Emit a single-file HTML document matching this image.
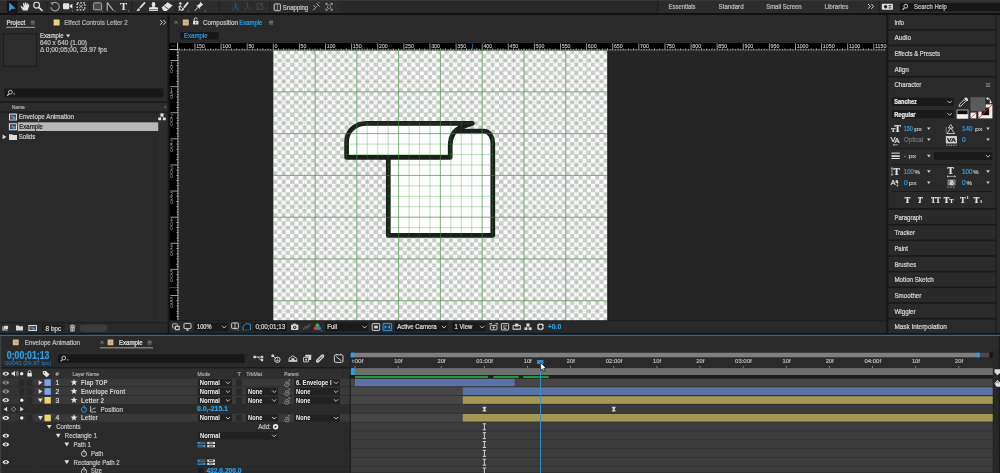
<!DOCTYPE html>
<html lang="en"><head><meta charset="utf-8"><title>After Effects - Example</title>
<style>
html,body{margin:0;padding:0;background:#222;overflow:hidden}
svg{display:block;filter:blur(0.35px);opacity:.999;will-change:transform;font-family:"Liberation Sans",sans-serif}
text{white-space:pre}
</style></head><body>
<svg width="1000" height="473" viewBox="0 0 1000 473">
<rect x="0" y="0" width="1000" height="473" fill="#171717"/>
<rect x="0" y="0" width="1000" height="13" fill="#2d2d2d"/>
<rect x="340" y="0" width="318" height="13" fill="#292929"/>
<rect x="0" y="0" width="1000" height="0.8" fill="#3b3b3b"/>
<rect x="0" y="14.7" width="167.5" height="318.3" fill="#2b2b2b"/>
<rect x="169.6" y="14.7" width="716.6" height="318.1" fill="#2b2b2b"/>
<rect x="888.4" y="14.7" width="111.6" height="318.3" fill="#1a1a1a"/>
<rect x="0" y="335.8" width="1000" height="137.2" fill="#2b2b2b"/>
<rect x="0" y="334.8" width="1000" height="1.1" fill="#2277b8"/>
<rect x="6.8" y="0.8" width="10.8" height="11.6" fill="#161616" rx="0.8"/>
<path d="M9.2,2.4 L9.2,11.2 L11.6,9 L15.6,8.6 Z" fill="#2d9fea"/>
<path d="M21.6,6.2 C21,5.4 20.4,5.6 20.6,6.4 L23,10.6 L27.6,10.6 L29.2,6 L29.2,4.2 L28.2,4.2 L28,5.6 L27.6,3 L26.6,3 L26.4,5.4 L25.8,2.4 L24.8,2.4 L24.8,5.4 L23.8,3 L22.9,3.2 L23.6,7.4 Z" fill="#e4e4e4"/>
<circle cx="36.6" cy="5.2" r="2.9" fill="none" stroke="#e4e4e4" stroke-width="1.1"/>
<line x1="38.8" y1="7.4" x2="42" y2="10.4" stroke="#e4e4e4" stroke-width="1.5" stroke-linecap="round"/>
<line x1="46.8" y1="1.5" x2="46.8" y2="12.5" stroke="#1d1d1d" stroke-width="0.8"/>
<path d="M52.6,3.2 A4.2,4.2 0 1 1 50.9,7.2" fill="none" stroke="#9a9a9a" stroke-width="1.2"/>
<path d="M50.4,2.2 L53.6,2.6 L52.2,5.4 Z" fill="#9a9a9a"/>
<rect x="63" y="3.2" width="6.2" height="6" fill="#e4e4e4" rx="1"/>
<path d="M69.2,6.2 L72.4,3.6 L72.4,8.8 Z" fill="#e4e4e4"/>
<path d="M71.6,10.4 l1.4,0 l0,1.4 z" fill="#9a9a9a"/>
<rect x="77.2" y="2.8" width="7.6" height="7" fill="none" stroke="#e4e4e4" stroke-width="1.3" stroke-dasharray="1.6 1.4"/>
<path d="M79,4.6 L83,8.2 M83,4.6 L79,8.2" fill="none" stroke="#bdbdbd" stroke-width="0.9"/>
<line x1="89.6" y1="1.5" x2="89.6" y2="12.5" stroke="#1d1d1d" stroke-width="0.8"/>
<rect x="93.6" y="2.8" width="8" height="7" rx="0.8" fill="#4a4a4a" stroke="#a8a8a8" stroke-width="1"/>
<path d="M101.4,10.6 l1.4,0 l0,1.4 z" fill="#9a9a9a"/>
<path d="M107.2,2.4 L107.2,10.8 M107.2,2.4 L113.2,10.4" fill="none" stroke="#b8b8b8" stroke-width="1.1"/>
<path d="M113.8,10.6 l1.4,0 l0,1.4 z" fill="#9a9a9a"/>
<text x="123.6" y="10.48" font-size="10.8" fill="#e4e4e4" font-weight="700" text-anchor="middle" font-family='"Liberation Serif", serif'>T</text>
<path d="M127.6,10.6 l1.4,0 l0,1.4 z" fill="#9a9a9a"/>
<line x1="131.9" y1="1.5" x2="131.9" y2="12.5" stroke="#1d1d1d" stroke-width="0.8"/>
<path d="M144.4,1.8 L145.6,3 L140.6,8.6 L139.2,7.4 Z" fill="#e4e4e4"/>
<path d="M138.8,8 L140.2,9.4 C139.4,10.8 138,11.2 136.4,10.9 C137.6,10 137.6,8.8 138.8,8 Z" fill="#e4e4e4"/>
<path d="M152.2,2.2 L154.8,2.2 L155.4,4.8 L154.6,7 L158,7.4 L158,9.4 L149,9.4 L149,7.4 L152.4,7 L151.6,4.8 Z" fill="#e4e4e4"/>
<rect x="149" y="10.1" width="9" height="0.9" fill="#e4e4e4"/>
<path d="M161.6,7.6 L167.6,2.2 L172.6,5.4 L166.6,10.9 L163.6,10.9 Z" fill="#e4e4e4"/>
<path d="M164.2,6 L168.4,9" fill="none" stroke="#2d2d2d" stroke-width="0.8"/>
<line x1="175.9" y1="1.5" x2="175.9" y2="12.5" stroke="#1d1d1d" stroke-width="0.8"/>
<path d="M187.6,1.8 L188.8,3 L184.6,8.2 L183.2,7 Z" fill="#e4e4e4"/>
<path d="M182.8,7.6 L184.2,9 C183.6,10.4 182.4,11 181,10.8 C182,10 182,8.6 182.8,7.6 Z" fill="#e4e4e4"/>
<circle cx="180.4" cy="3.4" r="1.2" fill="#e4e4e4"/>
<path d="M180.4,4.8 L179,10.8 M180.4,6.2 L182.2,7.8 M180.4,6.2 L178.2,7.2 M180,8.6 L181.4,10.8" fill="none" stroke="#e4e4e4" stroke-width="0.95"/>
<path d="M187.6,10.6 l1.4,0 l0,1.4 z" fill="#9a9a9a"/>
<path d="M200.2,1.8 L203.4,5 L201.8,5.4 L200,7.6 L200.2,9.2 L196.2,5.2 L197.8,5.2 L199.8,3.4 Z" fill="#e4e4e4"/>
<line x1="198" y1="7.2" x2="194.8" y2="10.8" stroke="#e4e4e4" stroke-width="1"/>
<path d="M204.4,10.6 l1.4,0 l0,1.4 z" fill="#9a9a9a"/>
<line x1="219.2" y1="1.5" x2="219.2" y2="12.5" stroke="#1d1d1d" stroke-width="0.8"/>
<rect x="230.6" y="1.2" width="10" height="11" fill="#2a3238" rx="0.8"/>
<path d="M235.6,2.6 L235.6,7 L232.2,10.4 M235.6,7 L239,10.4" fill="none" stroke="#2a5f8a" stroke-width="0.9"/>
<path d="M247.6,2.6 L247.6,7 L244.2,10.4 M247.6,7 L251,10.4" fill="none" stroke="#4e4e4e" stroke-width="0.9"/>
<path d="M257,3.4 L262.6,3.4 L262.6,9.4 L257,9.4 Z M257,9.4 L262.6,3.4" fill="none" stroke="#474747" stroke-width="0.9"/>
<line x1="270" y1="1.5" x2="270" y2="12.5" stroke="#1d1d1d" stroke-width="0.8"/>
<rect x="274.2" y="3.9" width="6.2" height="6.8" rx="0.9" fill="none" stroke="#d8d8d8" stroke-width="0.95"/>
<line x1="277.3" y1="3.9" x2="277.3" y2="10.7" stroke="#bdbdbd" stroke-width="0.7"/>
<text x="282.8" y="9.78" font-size="6.8" fill="#c8c8c8" textLength="25.4" lengthAdjust="spacingAndGlyphs" stroke="#c8c8c8" stroke-width="0.22">Snapping</text>
<path d="M313.2,10.2 L317,6.2 M316.4,3.4 L319.6,6.4 M318.6,3 l0.6,-0.8 M315.2,6.2 l-1.8,-0.4" fill="none" stroke="#c4c4c4" stroke-width="0.9"/>
<path d="M326,5 L326,3.4 L327.6,3.4 M330.6,3.4 L332.2,3.4 L332.2,5 M332.2,8.6 L332.2,10.2 L330.6,10.2 M327.6,10.2 L326,10.2 L326,8.6" fill="none" stroke="#c4c4c4" stroke-width="0.9"/>
<rect x="327.6" y="5" width="3" height="3.6" fill="none" stroke="#c4c4c4" stroke-width="0.8" stroke-dasharray="1 0.7"/>
<line x1="658" y1="1.5" x2="658" y2="12.5" stroke="#1d1d1d" stroke-width="0.8"/>
<text x="668.6" y="9.21" font-size="6.6" fill="#bdbdbd" textLength="27" lengthAdjust="spacingAndGlyphs" stroke="#bdbdbd" stroke-width="0.22">Essentials</text>
<text x="718.6" y="9.21" font-size="6.6" fill="#bdbdbd" textLength="25" lengthAdjust="spacingAndGlyphs" stroke="#bdbdbd" stroke-width="0.22">Standard</text>
<text x="766.2" y="9.21" font-size="6.6" fill="#bdbdbd" textLength="35.4" lengthAdjust="spacingAndGlyphs" stroke="#bdbdbd" stroke-width="0.22">Small Screen</text>
<text x="824.4" y="9.21" font-size="6.6" fill="#bdbdbd" textLength="24" lengthAdjust="spacingAndGlyphs" stroke="#bdbdbd" stroke-width="0.22">Libraries</text>
<path d="M868,4 L870.2,6.4 L868,8.8 M871.4,4 L873.6,6.4 L871.4,8.8" fill="none" stroke="#d8d8d8" stroke-width="0.95"/>
<line x1="879" y1="1.5" x2="879" y2="12.5" stroke="#1d1d1d" stroke-width="0.8"/>
<rect x="881.8" y="3.8" width="11.2" height="6" fill="#dedede" rx="1"/>
<circle cx="885.6" cy="6.8" r="1.7" fill="#2d2d2d"/>
<rect x="888.6" y="5.2" width="2.8" height="1" fill="#2d2d2d"/>
<rect x="888.6" y="7.4" width="2.8" height="1" fill="#2d2d2d"/>
<rect x="899.8" y="3" width="100.2" height="8.2" fill="#181818" rx="0.8"/>
<circle cx="905.8" cy="6.2" r="1.9" fill="none" stroke="#d0d0d0" stroke-width="0.9"/>
<line x1="904.4" y1="7.8" x2="902.6" y2="9.8" stroke="#d0d0d0" stroke-width="1.1"/>
<text x="914" y="9.28" font-size="6.8" fill="#c9c9c9" textLength="32.8" lengthAdjust="spacingAndGlyphs" stroke="#c9c9c9" stroke-width="0.22">Search Help</text>
<rect x="0" y="13" width="1000" height="1.7" fill="#111111"/>
<text x="6.6" y="24.88" font-size="6.8" fill="#e2e2e2" textLength="18.6" lengthAdjust="spacingAndGlyphs" stroke="#e2e2e2" stroke-width="0.22">Project</text>
<rect x="30.6" y="20.7" width="4" height="0.8" fill="#8a8a8a"/>
<rect x="30.6" y="22.15" width="4" height="0.8" fill="#8a8a8a"/>
<rect x="30.6" y="23.6" width="4" height="0.8" fill="#8a8a8a"/>
<rect x="6" y="26.8" width="29" height="0.9" fill="#b4b4b4"/>
<rect x="53.6" y="19.6" width="6" height="6" fill="#ead57a" rx="0.6"/>
<text x="64.2" y="24.88" font-size="6.8" fill="#b4b4b4" textLength="63.4" lengthAdjust="spacingAndGlyphs" stroke="#b4b4b4" stroke-width="0.22">Effect Controls Letter 2</text>
<path d="M160.2,20 L162.4,22.4 L160.2,24.8 M163.4,20 L165.6,22.4 L163.4,24.8" fill="none" stroke="#d8d8d8" stroke-width="0.95"/>
<rect x="3.6" y="33.9" width="32.8" height="32.3" fill="#2e2e2e" stroke="#1c1c1c" stroke-width="0.8"/>
<text x="40" y="38.18" font-size="6.8" fill="#d8d8d8" textLength="23.6" lengthAdjust="spacingAndGlyphs" stroke="#d8d8d8" stroke-width="0.22">Example</text>
<path d="M66,34.4 L70.2,34.4 L68.1,37.4 Z" fill="#e0e0e0"/>
<text x="40" y="44.91" font-size="6.6" fill="#c0c0c0" textLength="47" lengthAdjust="spacingAndGlyphs" stroke="#c0c0c0" stroke-width="0.22">640 x 640 (1.00)</text>
<text x="40" y="51.91" font-size="6.6" fill="#c0c0c0" textLength="67" lengthAdjust="spacingAndGlyphs" stroke="#c0c0c0" stroke-width="0.22">Δ 0;00;05;00, 29.97 fps</text>
<rect x="4.3" y="88.5" width="159.1" height="8.9" fill="#191919" rx="1"/>
<circle cx="10.4" cy="92.2" r="1.9" fill="none" stroke="#d0d0d0" stroke-width="0.9"/>
<line x1="9" y1="93.8" x2="7.2" y2="95.6" stroke="#d0d0d0" stroke-width="1.1"/>
<path d="M13.2,93.6 l2.2,0 l-1.1,1.3 z" fill="#c0c0c0"/>
<rect x="0" y="101.6" width="167.5" height="1.4" fill="#181818"/>
<rect x="0" y="103" width="167.5" height="8.6" fill="#2e2e2e"/>
<rect x="0" y="111.6" width="167.5" height="1" fill="#1a1a1a"/>
<text x="11.8" y="109.23" font-size="5.8" fill="#b0b0b0" textLength="12.8" lengthAdjust="spacingAndGlyphs" stroke="#b0b0b0" stroke-width="0.22">Name</text>
<rect x="164.6" y="106.6" width="1.6" height="1.2" fill="#2d9fea"/>
<rect x="158.2" y="112.6" width="9.3" height="209.8" fill="#2e2e2e"/>
<rect x="9" y="113.6" width="8" height="7" fill="#dcdcdc" rx="0.6"/>
<rect x="10" y="114.6" width="6" height="5" fill="#3b4a63"/>
<circle cx="12.2" cy="116.8" r="1.5" fill="#d24a3a"/>
<rect x="12.6" y="116.6" width="2.8" height="2.4" fill="#4aa0d8"/>
<text x="18.8" y="119.48" font-size="6.8" fill="#cdcdcd" textLength="55.2" lengthAdjust="spacingAndGlyphs" stroke="#cdcdcd" stroke-width="0.22">Envelope Animation</text>
<rect x="160.4" y="113.4" width="3.2" height="2.6" fill="#e0e0e0"/>
<rect x="158.2" y="117.6" width="3" height="2.6" fill="#e0e0e0"/>
<rect x="162.8" y="117.6" width="3" height="2.6" fill="#e0e0e0"/>
<path d="M162,116 L159.7,117.8 M162,116 L164.3,117.8" fill="none" stroke="#e0e0e0" stroke-width="0.8"/>
<rect x="8" y="122.3" width="9.9" height="8.7" fill="#3c3c3c"/>
<rect x="17.9" y="122.3" width="140.3" height="8.7" fill="#b9b9b9"/>
<rect x="9" y="123.2" width="8" height="7" fill="#dcdcdc" rx="0.6"/>
<rect x="10" y="124.2" width="6" height="5" fill="#3b4a63"/>
<circle cx="12.2" cy="126.4" r="1.5" fill="#d24a3a"/>
<rect x="12.6" y="126.2" width="2.8" height="2.4" fill="#4aa0d8"/>
<text x="19.2" y="129.08" font-size="6.8" fill="#1c1c1c" textLength="23.8" lengthAdjust="spacingAndGlyphs" stroke="#1c1c1c" stroke-width="0.22">Example</text>
<path d="M2.6,134.6 L6.4,136.9 L2.6,139.2 Z" fill="#e0e0e0"/>
<path d="M9,134.2 L12.2,134.2 L13,135 L17,135 L17,140 L9,140 Z" fill="#dedede"/>
<text x="18.8" y="139.38" font-size="6.8" fill="#cdcdcd" textLength="16.4" lengthAdjust="spacingAndGlyphs" stroke="#cdcdcd" stroke-width="0.22">Solids</text>
<rect x="0" y="322.4" width="167.5" height="1" fill="#1a1a1a"/>
<rect x="0" y="323.4" width="167.5" height="9.6" fill="#2b2b2b"/>
<rect x="2.4" y="326.2" width="5.2" height="4.4" fill="#d8d8d8" rx="0.5"/>
<rect x="3.4" y="325.2" width="5.2" height="4.2" fill="#2a2a2a" rx="0.5"/>
<rect x="3.9" y="325.7" width="4.2" height="3.2" fill="#d8d8d8" rx="0.4"/>
<path d="M16,325.4 L18.6,325.4 L19.2,326.2 L23,326.2 L23,330.6 L16,330.6 Z" fill="#d8d8d8"/>
<rect x="28.4" y="325" width="8.6" height="6" fill="#dcdcdc" rx="0.6"/>
<rect x="29.4" y="326" width="6.6" height="4" fill="#3b4a63"/>
<circle cx="31.8" cy="327.8" r="1.4" fill="#d24a3a"/>
<rect x="32.4" y="327.6" width="2.6" height="2" fill="#4aa0d8"/>
<rect x="41.6" y="324.4" width="23" height="7.6" fill="#222222" rx="0.8"/>
<text x="45.6" y="330.61" font-size="6.6" fill="#d4d4d4" textLength="15.6" lengthAdjust="spacingAndGlyphs" stroke="#d4d4d4" stroke-width="0.22">8 bpc</text>
<path d="M69.6,326 L75.4,326 M71.4,326 L71.4,325 L73.6,325 L73.6,326" fill="none" stroke="#d0d0d0" stroke-width="0.8"/>
<path d="M70.2,326.8 L74.8,326.8 L74.4,331.4 L70.6,331.4 Z" fill="#cfcfcf"/>
<path d="M71.6,327.6 L71.8,330.6 M73.4,327.6 L73.2,330.6" fill="none" stroke="#2a2a2a" stroke-width="0.6"/>
<rect x="79.6" y="324.6" width="27.8" height="7.4" fill="#3d3d3d" rx="3.7"/>
<path d="M174.6,20.8 L177.6,23.8 M177.6,20.8 L174.6,23.8" fill="none" stroke="#8c8c8c" stroke-width="0.8"/>
<rect x="182.8" y="19.4" width="6" height="6" fill="#d9b98c" rx="0.6"/>
<path d="M185.8,19.4 L185.8,25.4 M182.8,22.4 L188.8,22.4" fill="none" stroke="#b8966a" stroke-width="0.5"/>
<path d="M194.2,20.8 L194.2,19.4 A1.5,1.5 0 0 1 197.2,19.2" fill="none" stroke="#e2e2e2" stroke-width="0.9"/>
<rect x="193" y="20.8" width="5.4" height="3.8" fill="#e2e2e2" rx="0.5"/>
<rect x="195.2" y="21.8" width="1" height="1.6" fill="#262626"/>
<text x="203" y="24.88" font-size="6.8" fill="#c6c6c6" textLength="35" lengthAdjust="spacingAndGlyphs" stroke="#c6c6c6" stroke-width="0.22">Composition</text>
<text x="239.2" y="24.88" font-size="6.8" fill="#2d9fea" textLength="23.2" lengthAdjust="spacingAndGlyphs" stroke="#2d9fea" stroke-width="0.22">Example</text>
<rect x="269" y="20.7" width="4" height="0.8" fill="#8a8a8a"/>
<rect x="269" y="22.15" width="4" height="0.8" fill="#8a8a8a"/>
<rect x="269" y="23.6" width="4" height="0.8" fill="#8a8a8a"/>
<rect x="180.2" y="32" width="38.4" height="7.4" fill="#191919" rx="0.8"/>
<text x="184" y="38.18" font-size="6.8" fill="#2d9fea" textLength="23.6" lengthAdjust="spacingAndGlyphs" stroke="#2d9fea" stroke-width="0.22">Example</text>
<defs>
<clipPath id="viewclip"><rect x="178.4" y="50.3" width="707.6" height="270.1"/></clipPath>
<pattern id="chk" x="273.3" y="8.3" width="8.36" height="8.36" patternUnits="userSpaceOnUse">
<rect x="0" y="0" width="8.36" height="8.36" fill="#ffffff"/>
<rect x="4.18" y="0" width="4.18" height="4.18" fill="#cccccc"/>
<rect x="0" y="4.18" width="4.18" height="4.18" fill="#cccccc"/>
</pattern>
</defs>
<rect x="178.4" y="50.3" width="707.6" height="270.1" fill="#262626"/>
<g clip-path="url(#viewclip)">
<rect x="273.3" y="8.3" width="334.2" height="334.2" fill="url(#chk)"/>
<path d="M388.3,157 L388.3,235.4 L492.8,235.4 L492.8,143.5 C492.8,137 489.5,131.2 484,131.2 L452,131.2 Z" fill="#ffffff" stroke="#1a211c" stroke-width="4.7" stroke-linejoin="round"/>
<path d="M472.4,123.3 L366.5,123.3 C354.5,123.3 346.6,131.5 346.6,142 L346.6,157.4 L450.2,157.4 L450.2,146 C450.2,136 454.5,129.6 462,127 L472.4,123.3 Z" fill="#ffffff" stroke="#1a211c" stroke-width="4.7" stroke-linejoin="round" stroke-linecap="round"/>
<line x1="273.3" y1="8.3" x2="273.3" y2="342.5" stroke="#3f9a3f" stroke-width="0.65" stroke-opacity="0.24"/>
<line x1="273.3" y1="8.3" x2="607.5" y2="8.3" stroke="#3f9a3f" stroke-width="0.65" stroke-opacity="0.24"/>
<line x1="283.74" y1="8.3" x2="283.74" y2="342.5" stroke="#3f9a3f" stroke-width="0.65" stroke-opacity="0.24"/>
<line x1="273.3" y1="18.74" x2="607.5" y2="18.74" stroke="#3f9a3f" stroke-width="0.65" stroke-opacity="0.24"/>
<line x1="294.19" y1="8.3" x2="294.19" y2="342.5" stroke="#3f9a3f" stroke-width="0.65" stroke-opacity="0.24"/>
<line x1="273.3" y1="29.19" x2="607.5" y2="29.19" stroke="#3f9a3f" stroke-width="0.65" stroke-opacity="0.24"/>
<line x1="304.63" y1="8.3" x2="304.63" y2="342.5" stroke="#3f9a3f" stroke-width="0.65" stroke-opacity="0.24"/>
<line x1="273.3" y1="39.63" x2="607.5" y2="39.63" stroke="#3f9a3f" stroke-width="0.65" stroke-opacity="0.24"/>
<line x1="315.08" y1="8.3" x2="315.08" y2="342.5" stroke="#3a8c3a" stroke-width="0.9" stroke-opacity="0.72"/>
<line x1="273.3" y1="50.08" x2="607.5" y2="50.08" stroke="#3a8c3a" stroke-width="0.9" stroke-opacity="0.72"/>
<line x1="325.52" y1="8.3" x2="325.52" y2="342.5" stroke="#3f9a3f" stroke-width="0.65" stroke-opacity="0.24"/>
<line x1="273.3" y1="60.52" x2="607.5" y2="60.52" stroke="#3f9a3f" stroke-width="0.65" stroke-opacity="0.24"/>
<line x1="335.96" y1="8.3" x2="335.96" y2="342.5" stroke="#3f9a3f" stroke-width="0.65" stroke-opacity="0.24"/>
<line x1="273.3" y1="70.96" x2="607.5" y2="70.96" stroke="#3f9a3f" stroke-width="0.65" stroke-opacity="0.24"/>
<line x1="346.41" y1="8.3" x2="346.41" y2="342.5" stroke="#3f9a3f" stroke-width="0.65" stroke-opacity="0.24"/>
<line x1="273.3" y1="81.41" x2="607.5" y2="81.41" stroke="#3f9a3f" stroke-width="0.65" stroke-opacity="0.24"/>
<line x1="356.85" y1="8.3" x2="356.85" y2="342.5" stroke="#3a8c3a" stroke-width="0.9" stroke-opacity="0.72"/>
<line x1="273.3" y1="91.85" x2="607.5" y2="91.85" stroke="#3a8c3a" stroke-width="0.9" stroke-opacity="0.72"/>
<line x1="367.29" y1="8.3" x2="367.29" y2="342.5" stroke="#3f9a3f" stroke-width="0.65" stroke-opacity="0.24"/>
<line x1="273.3" y1="102.29" x2="607.5" y2="102.29" stroke="#3f9a3f" stroke-width="0.65" stroke-opacity="0.24"/>
<line x1="377.74" y1="8.3" x2="377.74" y2="342.5" stroke="#3f9a3f" stroke-width="0.65" stroke-opacity="0.24"/>
<line x1="273.3" y1="112.74" x2="607.5" y2="112.74" stroke="#3f9a3f" stroke-width="0.65" stroke-opacity="0.24"/>
<line x1="388.18" y1="8.3" x2="388.18" y2="342.5" stroke="#3f9a3f" stroke-width="0.65" stroke-opacity="0.24"/>
<line x1="273.3" y1="123.18" x2="607.5" y2="123.18" stroke="#3f9a3f" stroke-width="0.65" stroke-opacity="0.24"/>
<line x1="398.62" y1="8.3" x2="398.62" y2="342.5" stroke="#3a8c3a" stroke-width="0.9" stroke-opacity="0.72"/>
<line x1="273.3" y1="133.62" x2="607.5" y2="133.62" stroke="#3a8c3a" stroke-width="0.9" stroke-opacity="0.72"/>
<line x1="409.07" y1="8.3" x2="409.07" y2="342.5" stroke="#3f9a3f" stroke-width="0.65" stroke-opacity="0.24"/>
<line x1="273.3" y1="144.07" x2="607.5" y2="144.07" stroke="#3f9a3f" stroke-width="0.65" stroke-opacity="0.24"/>
<line x1="419.51" y1="8.3" x2="419.51" y2="342.5" stroke="#3f9a3f" stroke-width="0.65" stroke-opacity="0.24"/>
<line x1="273.3" y1="154.51" x2="607.5" y2="154.51" stroke="#3f9a3f" stroke-width="0.65" stroke-opacity="0.24"/>
<line x1="429.96" y1="8.3" x2="429.96" y2="342.5" stroke="#3f9a3f" stroke-width="0.65" stroke-opacity="0.24"/>
<line x1="273.3" y1="164.96" x2="607.5" y2="164.96" stroke="#3f9a3f" stroke-width="0.65" stroke-opacity="0.24"/>
<line x1="440.4" y1="8.3" x2="440.4" y2="342.5" stroke="#3a8c3a" stroke-width="0.9" stroke-opacity="0.72"/>
<line x1="273.3" y1="175.4" x2="607.5" y2="175.4" stroke="#3a8c3a" stroke-width="0.9" stroke-opacity="0.72"/>
<line x1="450.84" y1="8.3" x2="450.84" y2="342.5" stroke="#3f9a3f" stroke-width="0.65" stroke-opacity="0.24"/>
<line x1="273.3" y1="185.84" x2="607.5" y2="185.84" stroke="#3f9a3f" stroke-width="0.65" stroke-opacity="0.24"/>
<line x1="461.29" y1="8.3" x2="461.29" y2="342.5" stroke="#3f9a3f" stroke-width="0.65" stroke-opacity="0.24"/>
<line x1="273.3" y1="196.29" x2="607.5" y2="196.29" stroke="#3f9a3f" stroke-width="0.65" stroke-opacity="0.24"/>
<line x1="471.73" y1="8.3" x2="471.73" y2="342.5" stroke="#3f9a3f" stroke-width="0.65" stroke-opacity="0.24"/>
<line x1="273.3" y1="206.73" x2="607.5" y2="206.73" stroke="#3f9a3f" stroke-width="0.65" stroke-opacity="0.24"/>
<line x1="482.18" y1="8.3" x2="482.18" y2="342.5" stroke="#3a8c3a" stroke-width="0.9" stroke-opacity="0.72"/>
<line x1="273.3" y1="217.18" x2="607.5" y2="217.18" stroke="#3a8c3a" stroke-width="0.9" stroke-opacity="0.72"/>
<line x1="492.62" y1="8.3" x2="492.62" y2="342.5" stroke="#3f9a3f" stroke-width="0.65" stroke-opacity="0.24"/>
<line x1="273.3" y1="227.62" x2="607.5" y2="227.62" stroke="#3f9a3f" stroke-width="0.65" stroke-opacity="0.24"/>
<line x1="503.06" y1="8.3" x2="503.06" y2="342.5" stroke="#3f9a3f" stroke-width="0.65" stroke-opacity="0.24"/>
<line x1="273.3" y1="238.06" x2="607.5" y2="238.06" stroke="#3f9a3f" stroke-width="0.65" stroke-opacity="0.24"/>
<line x1="513.51" y1="8.3" x2="513.51" y2="342.5" stroke="#3f9a3f" stroke-width="0.65" stroke-opacity="0.24"/>
<line x1="273.3" y1="248.51" x2="607.5" y2="248.51" stroke="#3f9a3f" stroke-width="0.65" stroke-opacity="0.24"/>
<line x1="523.95" y1="8.3" x2="523.95" y2="342.5" stroke="#3a8c3a" stroke-width="0.9" stroke-opacity="0.72"/>
<line x1="273.3" y1="258.95" x2="607.5" y2="258.95" stroke="#3a8c3a" stroke-width="0.9" stroke-opacity="0.72"/>
<line x1="534.39" y1="8.3" x2="534.39" y2="342.5" stroke="#3f9a3f" stroke-width="0.65" stroke-opacity="0.24"/>
<line x1="273.3" y1="269.39" x2="607.5" y2="269.39" stroke="#3f9a3f" stroke-width="0.65" stroke-opacity="0.24"/>
<line x1="544.84" y1="8.3" x2="544.84" y2="342.5" stroke="#3f9a3f" stroke-width="0.65" stroke-opacity="0.24"/>
<line x1="273.3" y1="279.84" x2="607.5" y2="279.84" stroke="#3f9a3f" stroke-width="0.65" stroke-opacity="0.24"/>
<line x1="555.28" y1="8.3" x2="555.28" y2="342.5" stroke="#3f9a3f" stroke-width="0.65" stroke-opacity="0.24"/>
<line x1="273.3" y1="290.28" x2="607.5" y2="290.28" stroke="#3f9a3f" stroke-width="0.65" stroke-opacity="0.24"/>
<line x1="565.73" y1="8.3" x2="565.73" y2="342.5" stroke="#3a8c3a" stroke-width="0.9" stroke-opacity="0.72"/>
<line x1="273.3" y1="300.73" x2="607.5" y2="300.73" stroke="#3a8c3a" stroke-width="0.9" stroke-opacity="0.72"/>
<line x1="576.17" y1="8.3" x2="576.17" y2="342.5" stroke="#3f9a3f" stroke-width="0.65" stroke-opacity="0.24"/>
<line x1="273.3" y1="311.17" x2="607.5" y2="311.17" stroke="#3f9a3f" stroke-width="0.65" stroke-opacity="0.24"/>
<line x1="586.61" y1="8.3" x2="586.61" y2="342.5" stroke="#3f9a3f" stroke-width="0.65" stroke-opacity="0.24"/>
<line x1="273.3" y1="321.61" x2="607.5" y2="321.61" stroke="#3f9a3f" stroke-width="0.65" stroke-opacity="0.24"/>
<line x1="597.06" y1="8.3" x2="597.06" y2="342.5" stroke="#3f9a3f" stroke-width="0.65" stroke-opacity="0.24"/>
<line x1="273.3" y1="332.06" x2="607.5" y2="332.06" stroke="#3f9a3f" stroke-width="0.65" stroke-opacity="0.24"/>
<line x1="607.5" y1="8.3" x2="607.5" y2="342.5" stroke="#3f9a3f" stroke-width="0.65" stroke-opacity="0.24"/>
<line x1="273.3" y1="342.5" x2="607.5" y2="342.5" stroke="#3f9a3f" stroke-width="0.65" stroke-opacity="0.24"/>
<line x1="607.8" y1="50.3" x2="607.8" y2="320.4" stroke="#151515" stroke-width="0.8"/>
<clipPath id="shapeclip"><path d="M388.3,157 L388.3,235.4 L492.8,235.4 L492.8,135 L452,131.2 Z"/><path d="M470,123.3 L366.5,123.3 C354.5,123.3 346.6,131.5 346.6,142 L346.6,157.4 L450.2,157.4 L450.2,144 C450.2,134 455,126.6 470,123.3 Z"/></clipPath>
<g clip-path="url(#shapeclip)">
<line x1="273.3" y1="8.3" x2="273.3" y2="342.5" stroke="#3f9a3f" stroke-width="0.65" stroke-opacity="0.3"/>
<line x1="273.3" y1="8.3" x2="607.5" y2="8.3" stroke="#3f9a3f" stroke-width="0.65" stroke-opacity="0.3"/>
<line x1="283.74" y1="8.3" x2="283.74" y2="342.5" stroke="#3f9a3f" stroke-width="0.65" stroke-opacity="0.3"/>
<line x1="273.3" y1="18.74" x2="607.5" y2="18.74" stroke="#3f9a3f" stroke-width="0.65" stroke-opacity="0.3"/>
<line x1="294.19" y1="8.3" x2="294.19" y2="342.5" stroke="#3f9a3f" stroke-width="0.65" stroke-opacity="0.3"/>
<line x1="273.3" y1="29.19" x2="607.5" y2="29.19" stroke="#3f9a3f" stroke-width="0.65" stroke-opacity="0.3"/>
<line x1="304.63" y1="8.3" x2="304.63" y2="342.5" stroke="#3f9a3f" stroke-width="0.65" stroke-opacity="0.3"/>
<line x1="273.3" y1="39.63" x2="607.5" y2="39.63" stroke="#3f9a3f" stroke-width="0.65" stroke-opacity="0.3"/>
<line x1="325.52" y1="8.3" x2="325.52" y2="342.5" stroke="#3f9a3f" stroke-width="0.65" stroke-opacity="0.3"/>
<line x1="273.3" y1="60.52" x2="607.5" y2="60.52" stroke="#3f9a3f" stroke-width="0.65" stroke-opacity="0.3"/>
<line x1="335.96" y1="8.3" x2="335.96" y2="342.5" stroke="#3f9a3f" stroke-width="0.65" stroke-opacity="0.3"/>
<line x1="273.3" y1="70.96" x2="607.5" y2="70.96" stroke="#3f9a3f" stroke-width="0.65" stroke-opacity="0.3"/>
<line x1="346.41" y1="8.3" x2="346.41" y2="342.5" stroke="#3f9a3f" stroke-width="0.65" stroke-opacity="0.3"/>
<line x1="273.3" y1="81.41" x2="607.5" y2="81.41" stroke="#3f9a3f" stroke-width="0.65" stroke-opacity="0.3"/>
<line x1="367.29" y1="8.3" x2="367.29" y2="342.5" stroke="#3f9a3f" stroke-width="0.65" stroke-opacity="0.3"/>
<line x1="273.3" y1="102.29" x2="607.5" y2="102.29" stroke="#3f9a3f" stroke-width="0.65" stroke-opacity="0.3"/>
<line x1="377.74" y1="8.3" x2="377.74" y2="342.5" stroke="#3f9a3f" stroke-width="0.65" stroke-opacity="0.3"/>
<line x1="273.3" y1="112.74" x2="607.5" y2="112.74" stroke="#3f9a3f" stroke-width="0.65" stroke-opacity="0.3"/>
<line x1="388.18" y1="8.3" x2="388.18" y2="342.5" stroke="#3f9a3f" stroke-width="0.65" stroke-opacity="0.3"/>
<line x1="273.3" y1="123.18" x2="607.5" y2="123.18" stroke="#3f9a3f" stroke-width="0.65" stroke-opacity="0.3"/>
<line x1="409.07" y1="8.3" x2="409.07" y2="342.5" stroke="#3f9a3f" stroke-width="0.65" stroke-opacity="0.3"/>
<line x1="273.3" y1="144.07" x2="607.5" y2="144.07" stroke="#3f9a3f" stroke-width="0.65" stroke-opacity="0.3"/>
<line x1="419.51" y1="8.3" x2="419.51" y2="342.5" stroke="#3f9a3f" stroke-width="0.65" stroke-opacity="0.3"/>
<line x1="273.3" y1="154.51" x2="607.5" y2="154.51" stroke="#3f9a3f" stroke-width="0.65" stroke-opacity="0.3"/>
<line x1="429.96" y1="8.3" x2="429.96" y2="342.5" stroke="#3f9a3f" stroke-width="0.65" stroke-opacity="0.3"/>
<line x1="273.3" y1="164.96" x2="607.5" y2="164.96" stroke="#3f9a3f" stroke-width="0.65" stroke-opacity="0.3"/>
<line x1="450.84" y1="8.3" x2="450.84" y2="342.5" stroke="#3f9a3f" stroke-width="0.65" stroke-opacity="0.3"/>
<line x1="273.3" y1="185.84" x2="607.5" y2="185.84" stroke="#3f9a3f" stroke-width="0.65" stroke-opacity="0.3"/>
<line x1="461.29" y1="8.3" x2="461.29" y2="342.5" stroke="#3f9a3f" stroke-width="0.65" stroke-opacity="0.3"/>
<line x1="273.3" y1="196.29" x2="607.5" y2="196.29" stroke="#3f9a3f" stroke-width="0.65" stroke-opacity="0.3"/>
<line x1="471.73" y1="8.3" x2="471.73" y2="342.5" stroke="#3f9a3f" stroke-width="0.65" stroke-opacity="0.3"/>
<line x1="273.3" y1="206.73" x2="607.5" y2="206.73" stroke="#3f9a3f" stroke-width="0.65" stroke-opacity="0.3"/>
<line x1="492.62" y1="8.3" x2="492.62" y2="342.5" stroke="#3f9a3f" stroke-width="0.65" stroke-opacity="0.3"/>
<line x1="273.3" y1="227.62" x2="607.5" y2="227.62" stroke="#3f9a3f" stroke-width="0.65" stroke-opacity="0.3"/>
<line x1="503.06" y1="8.3" x2="503.06" y2="342.5" stroke="#3f9a3f" stroke-width="0.65" stroke-opacity="0.3"/>
<line x1="273.3" y1="238.06" x2="607.5" y2="238.06" stroke="#3f9a3f" stroke-width="0.65" stroke-opacity="0.3"/>
<line x1="513.51" y1="8.3" x2="513.51" y2="342.5" stroke="#3f9a3f" stroke-width="0.65" stroke-opacity="0.3"/>
<line x1="273.3" y1="248.51" x2="607.5" y2="248.51" stroke="#3f9a3f" stroke-width="0.65" stroke-opacity="0.3"/>
<line x1="534.39" y1="8.3" x2="534.39" y2="342.5" stroke="#3f9a3f" stroke-width="0.65" stroke-opacity="0.3"/>
<line x1="273.3" y1="269.39" x2="607.5" y2="269.39" stroke="#3f9a3f" stroke-width="0.65" stroke-opacity="0.3"/>
<line x1="544.84" y1="8.3" x2="544.84" y2="342.5" stroke="#3f9a3f" stroke-width="0.65" stroke-opacity="0.3"/>
<line x1="273.3" y1="279.84" x2="607.5" y2="279.84" stroke="#3f9a3f" stroke-width="0.65" stroke-opacity="0.3"/>
<line x1="555.28" y1="8.3" x2="555.28" y2="342.5" stroke="#3f9a3f" stroke-width="0.65" stroke-opacity="0.3"/>
<line x1="273.3" y1="290.28" x2="607.5" y2="290.28" stroke="#3f9a3f" stroke-width="0.65" stroke-opacity="0.3"/>
<line x1="576.17" y1="8.3" x2="576.17" y2="342.5" stroke="#3f9a3f" stroke-width="0.65" stroke-opacity="0.3"/>
<line x1="273.3" y1="311.17" x2="607.5" y2="311.17" stroke="#3f9a3f" stroke-width="0.65" stroke-opacity="0.3"/>
<line x1="586.61" y1="8.3" x2="586.61" y2="342.5" stroke="#3f9a3f" stroke-width="0.65" stroke-opacity="0.3"/>
<line x1="273.3" y1="321.61" x2="607.5" y2="321.61" stroke="#3f9a3f" stroke-width="0.65" stroke-opacity="0.3"/>
<line x1="597.06" y1="8.3" x2="597.06" y2="342.5" stroke="#3f9a3f" stroke-width="0.65" stroke-opacity="0.3"/>
<line x1="273.3" y1="332.06" x2="607.5" y2="332.06" stroke="#3f9a3f" stroke-width="0.65" stroke-opacity="0.3"/>
<line x1="607.5" y1="8.3" x2="607.5" y2="342.5" stroke="#3f9a3f" stroke-width="0.65" stroke-opacity="0.3"/>
<line x1="273.3" y1="342.5" x2="607.5" y2="342.5" stroke="#3f9a3f" stroke-width="0.65" stroke-opacity="0.3"/>
</g>
</g>
<rect x="169.6" y="43" width="716.4" height="7.3" fill="#000000"/>
<rect x="169.6" y="43" width="8.8" height="277.4" fill="#000000"/>
<line x1="179.31" y1="48.6" x2="179.31" y2="50.3" stroke="#e6e6e6" stroke-width="0.8"/>
<line x1="181.92" y1="49.2" x2="181.92" y2="50.3" stroke="#e6e6e6" stroke-width="0.8"/>
<line x1="184.53" y1="48.6" x2="184.53" y2="50.3" stroke="#e6e6e6" stroke-width="0.8"/>
<line x1="187.14" y1="49.2" x2="187.14" y2="50.3" stroke="#e6e6e6" stroke-width="0.8"/>
<line x1="189.75" y1="48.6" x2="189.75" y2="50.3" stroke="#e6e6e6" stroke-width="0.8"/>
<line x1="192.36" y1="49.2" x2="192.36" y2="50.3" stroke="#e6e6e6" stroke-width="0.8"/>
<line x1="194.97" y1="43.4" x2="194.97" y2="50.3" stroke="#d8d8d8" stroke-width="0.7"/>
<text x="196.17" y="48.15" font-size="5.3" fill="#d0d0d0" stroke="#d0d0d0" stroke-width="0.1">150</text>
<line x1="197.58" y1="49.2" x2="197.58" y2="50.3" stroke="#e6e6e6" stroke-width="0.8"/>
<line x1="200.19" y1="48.6" x2="200.19" y2="50.3" stroke="#e6e6e6" stroke-width="0.8"/>
<line x1="202.8" y1="49.2" x2="202.8" y2="50.3" stroke="#e6e6e6" stroke-width="0.8"/>
<line x1="205.42" y1="48.6" x2="205.42" y2="50.3" stroke="#e6e6e6" stroke-width="0.8"/>
<line x1="208.03" y1="49.2" x2="208.03" y2="50.3" stroke="#e6e6e6" stroke-width="0.8"/>
<line x1="210.64" y1="48.6" x2="210.64" y2="50.3" stroke="#e6e6e6" stroke-width="0.8"/>
<line x1="213.25" y1="49.2" x2="213.25" y2="50.3" stroke="#e6e6e6" stroke-width="0.8"/>
<line x1="215.86" y1="48.6" x2="215.86" y2="50.3" stroke="#e6e6e6" stroke-width="0.8"/>
<line x1="218.47" y1="49.2" x2="218.47" y2="50.3" stroke="#e6e6e6" stroke-width="0.8"/>
<line x1="221.08" y1="43.4" x2="221.08" y2="50.3" stroke="#d8d8d8" stroke-width="0.7"/>
<text x="222.28" y="48.15" font-size="5.3" fill="#d0d0d0" stroke="#d0d0d0" stroke-width="0.1">100</text>
<line x1="223.69" y1="49.2" x2="223.69" y2="50.3" stroke="#e6e6e6" stroke-width="0.8"/>
<line x1="226.3" y1="48.6" x2="226.3" y2="50.3" stroke="#e6e6e6" stroke-width="0.8"/>
<line x1="228.91" y1="49.2" x2="228.91" y2="50.3" stroke="#e6e6e6" stroke-width="0.8"/>
<line x1="231.53" y1="48.6" x2="231.53" y2="50.3" stroke="#e6e6e6" stroke-width="0.8"/>
<line x1="234.14" y1="49.2" x2="234.14" y2="50.3" stroke="#e6e6e6" stroke-width="0.8"/>
<line x1="236.75" y1="48.6" x2="236.75" y2="50.3" stroke="#e6e6e6" stroke-width="0.8"/>
<line x1="239.36" y1="49.2" x2="239.36" y2="50.3" stroke="#e6e6e6" stroke-width="0.8"/>
<line x1="241.97" y1="48.6" x2="241.97" y2="50.3" stroke="#e6e6e6" stroke-width="0.8"/>
<line x1="244.58" y1="49.2" x2="244.58" y2="50.3" stroke="#e6e6e6" stroke-width="0.8"/>
<line x1="247.19" y1="43.4" x2="247.19" y2="50.3" stroke="#d8d8d8" stroke-width="0.7"/>
<text x="248.39" y="48.15" font-size="5.3" fill="#d0d0d0" stroke="#d0d0d0" stroke-width="0.1">50</text>
<line x1="249.8" y1="49.2" x2="249.8" y2="50.3" stroke="#e6e6e6" stroke-width="0.8"/>
<line x1="252.41" y1="48.6" x2="252.41" y2="50.3" stroke="#e6e6e6" stroke-width="0.8"/>
<line x1="255.02" y1="49.2" x2="255.02" y2="50.3" stroke="#e6e6e6" stroke-width="0.8"/>
<line x1="257.63" y1="48.6" x2="257.63" y2="50.3" stroke="#e6e6e6" stroke-width="0.8"/>
<line x1="260.25" y1="49.2" x2="260.25" y2="50.3" stroke="#e6e6e6" stroke-width="0.8"/>
<line x1="262.86" y1="48.6" x2="262.86" y2="50.3" stroke="#e6e6e6" stroke-width="0.8"/>
<line x1="265.47" y1="49.2" x2="265.47" y2="50.3" stroke="#e6e6e6" stroke-width="0.8"/>
<line x1="268.08" y1="48.6" x2="268.08" y2="50.3" stroke="#e6e6e6" stroke-width="0.8"/>
<line x1="270.69" y1="49.2" x2="270.69" y2="50.3" stroke="#e6e6e6" stroke-width="0.8"/>
<line x1="273.3" y1="43.4" x2="273.3" y2="50.3" stroke="#d8d8d8" stroke-width="0.7"/>
<text x="274.5" y="48.15" font-size="5.3" fill="#d0d0d0" stroke="#d0d0d0" stroke-width="0.1">0</text>
<line x1="275.91" y1="49.2" x2="275.91" y2="50.3" stroke="#e6e6e6" stroke-width="0.8"/>
<line x1="278.52" y1="48.6" x2="278.52" y2="50.3" stroke="#e6e6e6" stroke-width="0.8"/>
<line x1="281.13" y1="49.2" x2="281.13" y2="50.3" stroke="#e6e6e6" stroke-width="0.8"/>
<line x1="283.74" y1="48.6" x2="283.74" y2="50.3" stroke="#e6e6e6" stroke-width="0.8"/>
<line x1="286.35" y1="49.2" x2="286.35" y2="50.3" stroke="#e6e6e6" stroke-width="0.8"/>
<line x1="288.97" y1="48.6" x2="288.97" y2="50.3" stroke="#e6e6e6" stroke-width="0.8"/>
<line x1="291.58" y1="49.2" x2="291.58" y2="50.3" stroke="#e6e6e6" stroke-width="0.8"/>
<line x1="294.19" y1="48.6" x2="294.19" y2="50.3" stroke="#e6e6e6" stroke-width="0.8"/>
<line x1="296.8" y1="49.2" x2="296.8" y2="50.3" stroke="#e6e6e6" stroke-width="0.8"/>
<line x1="299.41" y1="43.4" x2="299.41" y2="50.3" stroke="#d8d8d8" stroke-width="0.7"/>
<text x="300.61" y="48.15" font-size="5.3" fill="#d0d0d0" stroke="#d0d0d0" stroke-width="0.1">50</text>
<line x1="302.02" y1="49.2" x2="302.02" y2="50.3" stroke="#e6e6e6" stroke-width="0.8"/>
<line x1="304.63" y1="48.6" x2="304.63" y2="50.3" stroke="#e6e6e6" stroke-width="0.8"/>
<line x1="307.24" y1="49.2" x2="307.24" y2="50.3" stroke="#e6e6e6" stroke-width="0.8"/>
<line x1="309.85" y1="48.6" x2="309.85" y2="50.3" stroke="#e6e6e6" stroke-width="0.8"/>
<line x1="312.46" y1="49.2" x2="312.46" y2="50.3" stroke="#e6e6e6" stroke-width="0.8"/>
<line x1="315.08" y1="48.6" x2="315.08" y2="50.3" stroke="#e6e6e6" stroke-width="0.8"/>
<line x1="317.69" y1="49.2" x2="317.69" y2="50.3" stroke="#e6e6e6" stroke-width="0.8"/>
<line x1="320.3" y1="48.6" x2="320.3" y2="50.3" stroke="#e6e6e6" stroke-width="0.8"/>
<line x1="322.91" y1="49.2" x2="322.91" y2="50.3" stroke="#e6e6e6" stroke-width="0.8"/>
<line x1="325.52" y1="43.4" x2="325.52" y2="50.3" stroke="#d8d8d8" stroke-width="0.7"/>
<text x="326.72" y="48.15" font-size="5.3" fill="#d0d0d0" stroke="#d0d0d0" stroke-width="0.1">100</text>
<line x1="328.13" y1="49.2" x2="328.13" y2="50.3" stroke="#e6e6e6" stroke-width="0.8"/>
<line x1="330.74" y1="48.6" x2="330.74" y2="50.3" stroke="#e6e6e6" stroke-width="0.8"/>
<line x1="333.35" y1="49.2" x2="333.35" y2="50.3" stroke="#e6e6e6" stroke-width="0.8"/>
<line x1="335.96" y1="48.6" x2="335.96" y2="50.3" stroke="#e6e6e6" stroke-width="0.8"/>
<line x1="338.57" y1="49.2" x2="338.57" y2="50.3" stroke="#e6e6e6" stroke-width="0.8"/>
<line x1="341.18" y1="48.6" x2="341.18" y2="50.3" stroke="#e6e6e6" stroke-width="0.8"/>
<line x1="343.8" y1="49.2" x2="343.8" y2="50.3" stroke="#e6e6e6" stroke-width="0.8"/>
<line x1="346.41" y1="48.6" x2="346.41" y2="50.3" stroke="#e6e6e6" stroke-width="0.8"/>
<line x1="349.02" y1="49.2" x2="349.02" y2="50.3" stroke="#e6e6e6" stroke-width="0.8"/>
<line x1="351.63" y1="43.4" x2="351.63" y2="50.3" stroke="#d8d8d8" stroke-width="0.7"/>
<text x="352.83" y="48.15" font-size="5.3" fill="#d0d0d0" stroke="#d0d0d0" stroke-width="0.1">150</text>
<line x1="354.24" y1="49.2" x2="354.24" y2="50.3" stroke="#e6e6e6" stroke-width="0.8"/>
<line x1="356.85" y1="48.6" x2="356.85" y2="50.3" stroke="#e6e6e6" stroke-width="0.8"/>
<line x1="359.46" y1="49.2" x2="359.46" y2="50.3" stroke="#e6e6e6" stroke-width="0.8"/>
<line x1="362.07" y1="48.6" x2="362.07" y2="50.3" stroke="#e6e6e6" stroke-width="0.8"/>
<line x1="364.68" y1="49.2" x2="364.68" y2="50.3" stroke="#e6e6e6" stroke-width="0.8"/>
<line x1="367.29" y1="48.6" x2="367.29" y2="50.3" stroke="#e6e6e6" stroke-width="0.8"/>
<line x1="369.9" y1="49.2" x2="369.9" y2="50.3" stroke="#e6e6e6" stroke-width="0.8"/>
<line x1="372.52" y1="48.6" x2="372.52" y2="50.3" stroke="#e6e6e6" stroke-width="0.8"/>
<line x1="375.13" y1="49.2" x2="375.13" y2="50.3" stroke="#e6e6e6" stroke-width="0.8"/>
<line x1="377.74" y1="43.4" x2="377.74" y2="50.3" stroke="#d8d8d8" stroke-width="0.7"/>
<text x="378.94" y="48.15" font-size="5.3" fill="#d0d0d0" stroke="#d0d0d0" stroke-width="0.1">200</text>
<line x1="380.35" y1="49.2" x2="380.35" y2="50.3" stroke="#e6e6e6" stroke-width="0.8"/>
<line x1="382.96" y1="48.6" x2="382.96" y2="50.3" stroke="#e6e6e6" stroke-width="0.8"/>
<line x1="385.57" y1="49.2" x2="385.57" y2="50.3" stroke="#e6e6e6" stroke-width="0.8"/>
<line x1="388.18" y1="48.6" x2="388.18" y2="50.3" stroke="#e6e6e6" stroke-width="0.8"/>
<line x1="390.79" y1="49.2" x2="390.79" y2="50.3" stroke="#e6e6e6" stroke-width="0.8"/>
<line x1="393.4" y1="48.6" x2="393.4" y2="50.3" stroke="#e6e6e6" stroke-width="0.8"/>
<line x1="396.01" y1="49.2" x2="396.01" y2="50.3" stroke="#e6e6e6" stroke-width="0.8"/>
<line x1="398.62" y1="48.6" x2="398.62" y2="50.3" stroke="#e6e6e6" stroke-width="0.8"/>
<line x1="401.24" y1="49.2" x2="401.24" y2="50.3" stroke="#e6e6e6" stroke-width="0.8"/>
<line x1="403.85" y1="43.4" x2="403.85" y2="50.3" stroke="#d8d8d8" stroke-width="0.7"/>
<text x="405.05" y="48.15" font-size="5.3" fill="#d0d0d0" stroke="#d0d0d0" stroke-width="0.1">250</text>
<line x1="406.46" y1="49.2" x2="406.46" y2="50.3" stroke="#e6e6e6" stroke-width="0.8"/>
<line x1="409.07" y1="48.6" x2="409.07" y2="50.3" stroke="#e6e6e6" stroke-width="0.8"/>
<line x1="411.68" y1="49.2" x2="411.68" y2="50.3" stroke="#e6e6e6" stroke-width="0.8"/>
<line x1="414.29" y1="48.6" x2="414.29" y2="50.3" stroke="#e6e6e6" stroke-width="0.8"/>
<line x1="416.9" y1="49.2" x2="416.9" y2="50.3" stroke="#e6e6e6" stroke-width="0.8"/>
<line x1="419.51" y1="48.6" x2="419.51" y2="50.3" stroke="#e6e6e6" stroke-width="0.8"/>
<line x1="422.12" y1="49.2" x2="422.12" y2="50.3" stroke="#e6e6e6" stroke-width="0.8"/>
<line x1="424.73" y1="48.6" x2="424.73" y2="50.3" stroke="#e6e6e6" stroke-width="0.8"/>
<line x1="427.35" y1="49.2" x2="427.35" y2="50.3" stroke="#e6e6e6" stroke-width="0.8"/>
<line x1="429.96" y1="43.4" x2="429.96" y2="50.3" stroke="#d8d8d8" stroke-width="0.7"/>
<text x="431.16" y="48.15" font-size="5.3" fill="#d0d0d0" stroke="#d0d0d0" stroke-width="0.1">300</text>
<line x1="432.57" y1="49.2" x2="432.57" y2="50.3" stroke="#e6e6e6" stroke-width="0.8"/>
<line x1="435.18" y1="48.6" x2="435.18" y2="50.3" stroke="#e6e6e6" stroke-width="0.8"/>
<line x1="437.79" y1="49.2" x2="437.79" y2="50.3" stroke="#e6e6e6" stroke-width="0.8"/>
<line x1="440.4" y1="48.6" x2="440.4" y2="50.3" stroke="#e6e6e6" stroke-width="0.8"/>
<line x1="443.01" y1="49.2" x2="443.01" y2="50.3" stroke="#e6e6e6" stroke-width="0.8"/>
<line x1="445.62" y1="48.6" x2="445.62" y2="50.3" stroke="#e6e6e6" stroke-width="0.8"/>
<line x1="448.23" y1="49.2" x2="448.23" y2="50.3" stroke="#e6e6e6" stroke-width="0.8"/>
<line x1="450.84" y1="48.6" x2="450.84" y2="50.3" stroke="#e6e6e6" stroke-width="0.8"/>
<line x1="453.45" y1="49.2" x2="453.45" y2="50.3" stroke="#e6e6e6" stroke-width="0.8"/>
<line x1="456.07" y1="43.4" x2="456.07" y2="50.3" stroke="#d8d8d8" stroke-width="0.7"/>
<text x="457.27" y="48.15" font-size="5.3" fill="#d0d0d0" stroke="#d0d0d0" stroke-width="0.1">350</text>
<line x1="458.68" y1="49.2" x2="458.68" y2="50.3" stroke="#e6e6e6" stroke-width="0.8"/>
<line x1="461.29" y1="48.6" x2="461.29" y2="50.3" stroke="#e6e6e6" stroke-width="0.8"/>
<line x1="463.9" y1="49.2" x2="463.9" y2="50.3" stroke="#e6e6e6" stroke-width="0.8"/>
<line x1="466.51" y1="48.6" x2="466.51" y2="50.3" stroke="#e6e6e6" stroke-width="0.8"/>
<line x1="469.12" y1="49.2" x2="469.12" y2="50.3" stroke="#e6e6e6" stroke-width="0.8"/>
<line x1="471.73" y1="48.6" x2="471.73" y2="50.3" stroke="#e6e6e6" stroke-width="0.8"/>
<line x1="474.34" y1="49.2" x2="474.34" y2="50.3" stroke="#e6e6e6" stroke-width="0.8"/>
<line x1="476.95" y1="48.6" x2="476.95" y2="50.3" stroke="#e6e6e6" stroke-width="0.8"/>
<line x1="479.56" y1="49.2" x2="479.56" y2="50.3" stroke="#e6e6e6" stroke-width="0.8"/>
<line x1="482.18" y1="43.4" x2="482.18" y2="50.3" stroke="#d8d8d8" stroke-width="0.7"/>
<text x="483.38" y="48.15" font-size="5.3" fill="#d0d0d0" stroke="#d0d0d0" stroke-width="0.1">400</text>
<line x1="484.79" y1="49.2" x2="484.79" y2="50.3" stroke="#e6e6e6" stroke-width="0.8"/>
<line x1="487.4" y1="48.6" x2="487.4" y2="50.3" stroke="#e6e6e6" stroke-width="0.8"/>
<line x1="490.01" y1="49.2" x2="490.01" y2="50.3" stroke="#e6e6e6" stroke-width="0.8"/>
<line x1="492.62" y1="48.6" x2="492.62" y2="50.3" stroke="#e6e6e6" stroke-width="0.8"/>
<line x1="495.23" y1="49.2" x2="495.23" y2="50.3" stroke="#e6e6e6" stroke-width="0.8"/>
<line x1="497.84" y1="48.6" x2="497.84" y2="50.3" stroke="#e6e6e6" stroke-width="0.8"/>
<line x1="500.45" y1="49.2" x2="500.45" y2="50.3" stroke="#e6e6e6" stroke-width="0.8"/>
<line x1="503.06" y1="48.6" x2="503.06" y2="50.3" stroke="#e6e6e6" stroke-width="0.8"/>
<line x1="505.67" y1="49.2" x2="505.67" y2="50.3" stroke="#e6e6e6" stroke-width="0.8"/>
<line x1="508.28" y1="43.4" x2="508.28" y2="50.3" stroke="#d8d8d8" stroke-width="0.7"/>
<text x="509.48" y="48.15" font-size="5.3" fill="#d0d0d0" stroke="#d0d0d0" stroke-width="0.1">450</text>
<line x1="510.9" y1="49.2" x2="510.9" y2="50.3" stroke="#e6e6e6" stroke-width="0.8"/>
<line x1="513.51" y1="48.6" x2="513.51" y2="50.3" stroke="#e6e6e6" stroke-width="0.8"/>
<line x1="516.12" y1="49.2" x2="516.12" y2="50.3" stroke="#e6e6e6" stroke-width="0.8"/>
<line x1="518.73" y1="48.6" x2="518.73" y2="50.3" stroke="#e6e6e6" stroke-width="0.8"/>
<line x1="521.34" y1="49.2" x2="521.34" y2="50.3" stroke="#e6e6e6" stroke-width="0.8"/>
<line x1="523.95" y1="48.6" x2="523.95" y2="50.3" stroke="#e6e6e6" stroke-width="0.8"/>
<line x1="526.56" y1="49.2" x2="526.56" y2="50.3" stroke="#e6e6e6" stroke-width="0.8"/>
<line x1="529.17" y1="48.6" x2="529.17" y2="50.3" stroke="#e6e6e6" stroke-width="0.8"/>
<line x1="531.78" y1="49.2" x2="531.78" y2="50.3" stroke="#e6e6e6" stroke-width="0.8"/>
<line x1="534.39" y1="43.4" x2="534.39" y2="50.3" stroke="#d8d8d8" stroke-width="0.7"/>
<text x="535.59" y="48.15" font-size="5.3" fill="#d0d0d0" stroke="#d0d0d0" stroke-width="0.1">500</text>
<line x1="537" y1="49.2" x2="537" y2="50.3" stroke="#e6e6e6" stroke-width="0.8"/>
<line x1="539.62" y1="48.6" x2="539.62" y2="50.3" stroke="#e6e6e6" stroke-width="0.8"/>
<line x1="542.23" y1="49.2" x2="542.23" y2="50.3" stroke="#e6e6e6" stroke-width="0.8"/>
<line x1="544.84" y1="48.6" x2="544.84" y2="50.3" stroke="#e6e6e6" stroke-width="0.8"/>
<line x1="547.45" y1="49.2" x2="547.45" y2="50.3" stroke="#e6e6e6" stroke-width="0.8"/>
<line x1="550.06" y1="48.6" x2="550.06" y2="50.3" stroke="#e6e6e6" stroke-width="0.8"/>
<line x1="552.67" y1="49.2" x2="552.67" y2="50.3" stroke="#e6e6e6" stroke-width="0.8"/>
<line x1="555.28" y1="48.6" x2="555.28" y2="50.3" stroke="#e6e6e6" stroke-width="0.8"/>
<line x1="557.89" y1="49.2" x2="557.89" y2="50.3" stroke="#e6e6e6" stroke-width="0.8"/>
<line x1="560.5" y1="43.4" x2="560.5" y2="50.3" stroke="#d8d8d8" stroke-width="0.7"/>
<text x="561.7" y="48.15" font-size="5.3" fill="#d0d0d0" stroke="#d0d0d0" stroke-width="0.1">550</text>
<line x1="563.11" y1="49.2" x2="563.11" y2="50.3" stroke="#e6e6e6" stroke-width="0.8"/>
<line x1="565.73" y1="48.6" x2="565.73" y2="50.3" stroke="#e6e6e6" stroke-width="0.8"/>
<line x1="568.34" y1="49.2" x2="568.34" y2="50.3" stroke="#e6e6e6" stroke-width="0.8"/>
<line x1="570.95" y1="48.6" x2="570.95" y2="50.3" stroke="#e6e6e6" stroke-width="0.8"/>
<line x1="573.56" y1="49.2" x2="573.56" y2="50.3" stroke="#e6e6e6" stroke-width="0.8"/>
<line x1="576.17" y1="48.6" x2="576.17" y2="50.3" stroke="#e6e6e6" stroke-width="0.8"/>
<line x1="578.78" y1="49.2" x2="578.78" y2="50.3" stroke="#e6e6e6" stroke-width="0.8"/>
<line x1="581.39" y1="48.6" x2="581.39" y2="50.3" stroke="#e6e6e6" stroke-width="0.8"/>
<line x1="584" y1="49.2" x2="584" y2="50.3" stroke="#e6e6e6" stroke-width="0.8"/>
<line x1="586.61" y1="43.4" x2="586.61" y2="50.3" stroke="#d8d8d8" stroke-width="0.7"/>
<text x="587.81" y="48.15" font-size="5.3" fill="#d0d0d0" stroke="#d0d0d0" stroke-width="0.1">600</text>
<line x1="589.22" y1="49.2" x2="589.22" y2="50.3" stroke="#e6e6e6" stroke-width="0.8"/>
<line x1="591.83" y1="48.6" x2="591.83" y2="50.3" stroke="#e6e6e6" stroke-width="0.8"/>
<line x1="594.45" y1="49.2" x2="594.45" y2="50.3" stroke="#e6e6e6" stroke-width="0.8"/>
<line x1="597.06" y1="48.6" x2="597.06" y2="50.3" stroke="#e6e6e6" stroke-width="0.8"/>
<line x1="599.67" y1="49.2" x2="599.67" y2="50.3" stroke="#e6e6e6" stroke-width="0.8"/>
<line x1="602.28" y1="48.6" x2="602.28" y2="50.3" stroke="#e6e6e6" stroke-width="0.8"/>
<line x1="604.89" y1="49.2" x2="604.89" y2="50.3" stroke="#e6e6e6" stroke-width="0.8"/>
<line x1="607.5" y1="48.6" x2="607.5" y2="50.3" stroke="#e6e6e6" stroke-width="0.8"/>
<line x1="610.11" y1="49.2" x2="610.11" y2="50.3" stroke="#e6e6e6" stroke-width="0.8"/>
<line x1="612.72" y1="43.4" x2="612.72" y2="50.3" stroke="#d8d8d8" stroke-width="0.7"/>
<text x="613.92" y="48.15" font-size="5.3" fill="#d0d0d0" stroke="#d0d0d0" stroke-width="0.1">650</text>
<line x1="615.33" y1="49.2" x2="615.33" y2="50.3" stroke="#e6e6e6" stroke-width="0.8"/>
<line x1="617.94" y1="48.6" x2="617.94" y2="50.3" stroke="#e6e6e6" stroke-width="0.8"/>
<line x1="620.55" y1="49.2" x2="620.55" y2="50.3" stroke="#e6e6e6" stroke-width="0.8"/>
<line x1="623.17" y1="48.6" x2="623.17" y2="50.3" stroke="#e6e6e6" stroke-width="0.8"/>
<line x1="625.78" y1="49.2" x2="625.78" y2="50.3" stroke="#e6e6e6" stroke-width="0.8"/>
<line x1="628.39" y1="48.6" x2="628.39" y2="50.3" stroke="#e6e6e6" stroke-width="0.8"/>
<line x1="631" y1="49.2" x2="631" y2="50.3" stroke="#e6e6e6" stroke-width="0.8"/>
<line x1="633.61" y1="48.6" x2="633.61" y2="50.3" stroke="#e6e6e6" stroke-width="0.8"/>
<line x1="636.22" y1="49.2" x2="636.22" y2="50.3" stroke="#e6e6e6" stroke-width="0.8"/>
<line x1="638.83" y1="43.4" x2="638.83" y2="50.3" stroke="#d8d8d8" stroke-width="0.7"/>
<text x="640.03" y="48.15" font-size="5.3" fill="#d0d0d0" stroke="#d0d0d0" stroke-width="0.1">700</text>
<line x1="641.44" y1="49.2" x2="641.44" y2="50.3" stroke="#e6e6e6" stroke-width="0.8"/>
<line x1="644.05" y1="48.6" x2="644.05" y2="50.3" stroke="#e6e6e6" stroke-width="0.8"/>
<line x1="646.66" y1="49.2" x2="646.66" y2="50.3" stroke="#e6e6e6" stroke-width="0.8"/>
<line x1="649.28" y1="48.6" x2="649.28" y2="50.3" stroke="#e6e6e6" stroke-width="0.8"/>
<line x1="651.89" y1="49.2" x2="651.89" y2="50.3" stroke="#e6e6e6" stroke-width="0.8"/>
<line x1="654.5" y1="48.6" x2="654.5" y2="50.3" stroke="#e6e6e6" stroke-width="0.8"/>
<line x1="657.11" y1="49.2" x2="657.11" y2="50.3" stroke="#e6e6e6" stroke-width="0.8"/>
<line x1="659.72" y1="48.6" x2="659.72" y2="50.3" stroke="#e6e6e6" stroke-width="0.8"/>
<line x1="662.33" y1="49.2" x2="662.33" y2="50.3" stroke="#e6e6e6" stroke-width="0.8"/>
<line x1="664.94" y1="43.4" x2="664.94" y2="50.3" stroke="#d8d8d8" stroke-width="0.7"/>
<text x="666.14" y="48.15" font-size="5.3" fill="#d0d0d0" stroke="#d0d0d0" stroke-width="0.1">750</text>
<line x1="667.55" y1="49.2" x2="667.55" y2="50.3" stroke="#e6e6e6" stroke-width="0.8"/>
<line x1="670.16" y1="48.6" x2="670.16" y2="50.3" stroke="#e6e6e6" stroke-width="0.8"/>
<line x1="672.77" y1="49.2" x2="672.77" y2="50.3" stroke="#e6e6e6" stroke-width="0.8"/>
<line x1="675.38" y1="48.6" x2="675.38" y2="50.3" stroke="#e6e6e6" stroke-width="0.8"/>
<line x1="678" y1="49.2" x2="678" y2="50.3" stroke="#e6e6e6" stroke-width="0.8"/>
<line x1="680.61" y1="48.6" x2="680.61" y2="50.3" stroke="#e6e6e6" stroke-width="0.8"/>
<line x1="683.22" y1="49.2" x2="683.22" y2="50.3" stroke="#e6e6e6" stroke-width="0.8"/>
<line x1="685.83" y1="48.6" x2="685.83" y2="50.3" stroke="#e6e6e6" stroke-width="0.8"/>
<line x1="688.44" y1="49.2" x2="688.44" y2="50.3" stroke="#e6e6e6" stroke-width="0.8"/>
<line x1="691.05" y1="43.4" x2="691.05" y2="50.3" stroke="#d8d8d8" stroke-width="0.7"/>
<text x="692.25" y="48.15" font-size="5.3" fill="#d0d0d0" stroke="#d0d0d0" stroke-width="0.1">800</text>
<line x1="693.66" y1="49.2" x2="693.66" y2="50.3" stroke="#e6e6e6" stroke-width="0.8"/>
<line x1="696.27" y1="48.6" x2="696.27" y2="50.3" stroke="#e6e6e6" stroke-width="0.8"/>
<line x1="698.88" y1="49.2" x2="698.88" y2="50.3" stroke="#e6e6e6" stroke-width="0.8"/>
<line x1="701.49" y1="48.6" x2="701.49" y2="50.3" stroke="#e6e6e6" stroke-width="0.8"/>
<line x1="704.1" y1="49.2" x2="704.1" y2="50.3" stroke="#e6e6e6" stroke-width="0.8"/>
<line x1="706.72" y1="48.6" x2="706.72" y2="50.3" stroke="#e6e6e6" stroke-width="0.8"/>
<line x1="709.33" y1="49.2" x2="709.33" y2="50.3" stroke="#e6e6e6" stroke-width="0.8"/>
<line x1="711.94" y1="48.6" x2="711.94" y2="50.3" stroke="#e6e6e6" stroke-width="0.8"/>
<line x1="714.55" y1="49.2" x2="714.55" y2="50.3" stroke="#e6e6e6" stroke-width="0.8"/>
<line x1="717.16" y1="43.4" x2="717.16" y2="50.3" stroke="#d8d8d8" stroke-width="0.7"/>
<text x="718.36" y="48.15" font-size="5.3" fill="#d0d0d0" stroke="#d0d0d0" stroke-width="0.1">850</text>
<line x1="719.77" y1="49.2" x2="719.77" y2="50.3" stroke="#e6e6e6" stroke-width="0.8"/>
<line x1="722.38" y1="48.6" x2="722.38" y2="50.3" stroke="#e6e6e6" stroke-width="0.8"/>
<line x1="724.99" y1="49.2" x2="724.99" y2="50.3" stroke="#e6e6e6" stroke-width="0.8"/>
<line x1="727.6" y1="48.6" x2="727.6" y2="50.3" stroke="#e6e6e6" stroke-width="0.8"/>
<line x1="730.21" y1="49.2" x2="730.21" y2="50.3" stroke="#e6e6e6" stroke-width="0.8"/>
<line x1="732.83" y1="48.6" x2="732.83" y2="50.3" stroke="#e6e6e6" stroke-width="0.8"/>
<line x1="735.44" y1="49.2" x2="735.44" y2="50.3" stroke="#e6e6e6" stroke-width="0.8"/>
<line x1="738.05" y1="48.6" x2="738.05" y2="50.3" stroke="#e6e6e6" stroke-width="0.8"/>
<line x1="740.66" y1="49.2" x2="740.66" y2="50.3" stroke="#e6e6e6" stroke-width="0.8"/>
<line x1="743.27" y1="43.4" x2="743.27" y2="50.3" stroke="#d8d8d8" stroke-width="0.7"/>
<text x="744.47" y="48.15" font-size="5.3" fill="#d0d0d0" stroke="#d0d0d0" stroke-width="0.1">900</text>
<line x1="745.88" y1="49.2" x2="745.88" y2="50.3" stroke="#e6e6e6" stroke-width="0.8"/>
<line x1="748.49" y1="48.6" x2="748.49" y2="50.3" stroke="#e6e6e6" stroke-width="0.8"/>
<line x1="751.1" y1="49.2" x2="751.1" y2="50.3" stroke="#e6e6e6" stroke-width="0.8"/>
<line x1="753.71" y1="48.6" x2="753.71" y2="50.3" stroke="#e6e6e6" stroke-width="0.8"/>
<line x1="756.32" y1="49.2" x2="756.32" y2="50.3" stroke="#e6e6e6" stroke-width="0.8"/>
<line x1="758.93" y1="48.6" x2="758.93" y2="50.3" stroke="#e6e6e6" stroke-width="0.8"/>
<line x1="761.55" y1="49.2" x2="761.55" y2="50.3" stroke="#e6e6e6" stroke-width="0.8"/>
<line x1="764.16" y1="48.6" x2="764.16" y2="50.3" stroke="#e6e6e6" stroke-width="0.8"/>
<line x1="766.77" y1="49.2" x2="766.77" y2="50.3" stroke="#e6e6e6" stroke-width="0.8"/>
<line x1="769.38" y1="43.4" x2="769.38" y2="50.3" stroke="#d8d8d8" stroke-width="0.7"/>
<text x="770.58" y="48.15" font-size="5.3" fill="#d0d0d0" stroke="#d0d0d0" stroke-width="0.1">950</text>
<line x1="771.99" y1="49.2" x2="771.99" y2="50.3" stroke="#e6e6e6" stroke-width="0.8"/>
<line x1="774.6" y1="48.6" x2="774.6" y2="50.3" stroke="#e6e6e6" stroke-width="0.8"/>
<line x1="777.21" y1="49.2" x2="777.21" y2="50.3" stroke="#e6e6e6" stroke-width="0.8"/>
<line x1="779.82" y1="48.6" x2="779.82" y2="50.3" stroke="#e6e6e6" stroke-width="0.8"/>
<line x1="782.43" y1="49.2" x2="782.43" y2="50.3" stroke="#e6e6e6" stroke-width="0.8"/>
<line x1="785.04" y1="48.6" x2="785.04" y2="50.3" stroke="#e6e6e6" stroke-width="0.8"/>
<line x1="787.65" y1="49.2" x2="787.65" y2="50.3" stroke="#e6e6e6" stroke-width="0.8"/>
<line x1="790.27" y1="48.6" x2="790.27" y2="50.3" stroke="#e6e6e6" stroke-width="0.8"/>
<line x1="792.88" y1="49.2" x2="792.88" y2="50.3" stroke="#e6e6e6" stroke-width="0.8"/>
<line x1="795.49" y1="43.4" x2="795.49" y2="50.3" stroke="#d8d8d8" stroke-width="0.7"/>
<text x="796.69" y="48.15" font-size="5.3" fill="#d0d0d0" stroke="#d0d0d0" stroke-width="0.1">1000</text>
<line x1="798.1" y1="49.2" x2="798.1" y2="50.3" stroke="#e6e6e6" stroke-width="0.8"/>
<line x1="800.71" y1="48.6" x2="800.71" y2="50.3" stroke="#e6e6e6" stroke-width="0.8"/>
<line x1="803.32" y1="49.2" x2="803.32" y2="50.3" stroke="#e6e6e6" stroke-width="0.8"/>
<line x1="805.93" y1="48.6" x2="805.93" y2="50.3" stroke="#e6e6e6" stroke-width="0.8"/>
<line x1="808.54" y1="49.2" x2="808.54" y2="50.3" stroke="#e6e6e6" stroke-width="0.8"/>
<line x1="811.15" y1="48.6" x2="811.15" y2="50.3" stroke="#e6e6e6" stroke-width="0.8"/>
<line x1="813.76" y1="49.2" x2="813.76" y2="50.3" stroke="#e6e6e6" stroke-width="0.8"/>
<line x1="816.38" y1="48.6" x2="816.38" y2="50.3" stroke="#e6e6e6" stroke-width="0.8"/>
<line x1="818.99" y1="49.2" x2="818.99" y2="50.3" stroke="#e6e6e6" stroke-width="0.8"/>
<line x1="821.6" y1="43.4" x2="821.6" y2="50.3" stroke="#d8d8d8" stroke-width="0.7"/>
<text x="822.8" y="48.15" font-size="5.3" fill="#d0d0d0" stroke="#d0d0d0" stroke-width="0.1">1050</text>
<line x1="824.21" y1="49.2" x2="824.21" y2="50.3" stroke="#e6e6e6" stroke-width="0.8"/>
<line x1="826.82" y1="48.6" x2="826.82" y2="50.3" stroke="#e6e6e6" stroke-width="0.8"/>
<line x1="829.43" y1="49.2" x2="829.43" y2="50.3" stroke="#e6e6e6" stroke-width="0.8"/>
<line x1="832.04" y1="48.6" x2="832.04" y2="50.3" stroke="#e6e6e6" stroke-width="0.8"/>
<line x1="834.65" y1="49.2" x2="834.65" y2="50.3" stroke="#e6e6e6" stroke-width="0.8"/>
<line x1="837.26" y1="48.6" x2="837.26" y2="50.3" stroke="#e6e6e6" stroke-width="0.8"/>
<line x1="839.87" y1="49.2" x2="839.87" y2="50.3" stroke="#e6e6e6" stroke-width="0.8"/>
<line x1="842.48" y1="48.6" x2="842.48" y2="50.3" stroke="#e6e6e6" stroke-width="0.8"/>
<line x1="845.1" y1="49.2" x2="845.1" y2="50.3" stroke="#e6e6e6" stroke-width="0.8"/>
<line x1="847.71" y1="43.4" x2="847.71" y2="50.3" stroke="#d8d8d8" stroke-width="0.7"/>
<text x="848.91" y="48.15" font-size="5.3" fill="#d0d0d0" stroke="#d0d0d0" stroke-width="0.1">1100</text>
<line x1="850.32" y1="49.2" x2="850.32" y2="50.3" stroke="#e6e6e6" stroke-width="0.8"/>
<line x1="852.93" y1="48.6" x2="852.93" y2="50.3" stroke="#e6e6e6" stroke-width="0.8"/>
<line x1="855.54" y1="49.2" x2="855.54" y2="50.3" stroke="#e6e6e6" stroke-width="0.8"/>
<line x1="858.15" y1="48.6" x2="858.15" y2="50.3" stroke="#e6e6e6" stroke-width="0.8"/>
<line x1="860.76" y1="49.2" x2="860.76" y2="50.3" stroke="#e6e6e6" stroke-width="0.8"/>
<line x1="863.37" y1="48.6" x2="863.37" y2="50.3" stroke="#e6e6e6" stroke-width="0.8"/>
<line x1="865.98" y1="49.2" x2="865.98" y2="50.3" stroke="#e6e6e6" stroke-width="0.8"/>
<line x1="868.59" y1="48.6" x2="868.59" y2="50.3" stroke="#e6e6e6" stroke-width="0.8"/>
<line x1="871.2" y1="49.2" x2="871.2" y2="50.3" stroke="#e6e6e6" stroke-width="0.8"/>
<line x1="873.82" y1="43.4" x2="873.82" y2="50.3" stroke="#d8d8d8" stroke-width="0.7"/>
<text x="875.02" y="48.15" font-size="5.3" fill="#d0d0d0" stroke="#d0d0d0" stroke-width="0.1">1150</text>
<line x1="876.43" y1="49.2" x2="876.43" y2="50.3" stroke="#e6e6e6" stroke-width="0.8"/>
<line x1="879.04" y1="48.6" x2="879.04" y2="50.3" stroke="#e6e6e6" stroke-width="0.8"/>
<line x1="881.65" y1="49.2" x2="881.65" y2="50.3" stroke="#e6e6e6" stroke-width="0.8"/>
<line x1="884.26" y1="48.6" x2="884.26" y2="50.3" stroke="#e6e6e6" stroke-width="0.8"/>
<rect x="178.4" y="49.6" width="707.6" height="0.8" fill="#bdbdbd" fill-opacity="0.55"/>
<line x1="177.2" y1="52.69" x2="178.4" y2="52.69" stroke="#e6e6e6" stroke-width="0.8"/>
<line x1="176.6" y1="55.3" x2="178.4" y2="55.3" stroke="#e6e6e6" stroke-width="0.8"/>
<line x1="177.2" y1="57.91" x2="178.4" y2="57.91" stroke="#e6e6e6" stroke-width="0.8"/>
<line x1="170.4" y1="60.52" x2="178.4" y2="60.52" stroke="#d8d8d8" stroke-width="0.7"/>
<text x="171.6" y="65.59" font-size="4.5" fill="#b4b4b4" text-anchor="middle">1</text>
<text x="171.6" y="69.44" font-size="4.5" fill="#b4b4b4" text-anchor="middle">0</text>
<text x="171.6" y="73.29" font-size="4.5" fill="#b4b4b4" text-anchor="middle">0</text>
<line x1="177.2" y1="63.13" x2="178.4" y2="63.13" stroke="#e6e6e6" stroke-width="0.8"/>
<line x1="176.6" y1="65.74" x2="178.4" y2="65.74" stroke="#e6e6e6" stroke-width="0.8"/>
<line x1="177.2" y1="68.35" x2="178.4" y2="68.35" stroke="#e6e6e6" stroke-width="0.8"/>
<line x1="176.6" y1="70.96" x2="178.4" y2="70.96" stroke="#e6e6e6" stroke-width="0.8"/>
<line x1="177.2" y1="73.57" x2="178.4" y2="73.57" stroke="#e6e6e6" stroke-width="0.8"/>
<line x1="176.6" y1="76.18" x2="178.4" y2="76.18" stroke="#e6e6e6" stroke-width="0.8"/>
<line x1="177.2" y1="78.8" x2="178.4" y2="78.8" stroke="#e6e6e6" stroke-width="0.8"/>
<line x1="176.6" y1="81.41" x2="178.4" y2="81.41" stroke="#e6e6e6" stroke-width="0.8"/>
<line x1="177.2" y1="84.02" x2="178.4" y2="84.02" stroke="#e6e6e6" stroke-width="0.8"/>
<line x1="170.4" y1="86.63" x2="178.4" y2="86.63" stroke="#d8d8d8" stroke-width="0.7"/>
<text x="171.6" y="91.7" font-size="4.5" fill="#b4b4b4" text-anchor="middle">1</text>
<text x="171.6" y="95.55" font-size="4.5" fill="#b4b4b4" text-anchor="middle">5</text>
<text x="171.6" y="99.4" font-size="4.5" fill="#b4b4b4" text-anchor="middle">0</text>
<line x1="177.2" y1="89.24" x2="178.4" y2="89.24" stroke="#e6e6e6" stroke-width="0.8"/>
<line x1="176.6" y1="91.85" x2="178.4" y2="91.85" stroke="#e6e6e6" stroke-width="0.8"/>
<line x1="177.2" y1="94.46" x2="178.4" y2="94.46" stroke="#e6e6e6" stroke-width="0.8"/>
<line x1="176.6" y1="97.07" x2="178.4" y2="97.07" stroke="#e6e6e6" stroke-width="0.8"/>
<line x1="177.2" y1="99.68" x2="178.4" y2="99.68" stroke="#e6e6e6" stroke-width="0.8"/>
<line x1="176.6" y1="102.29" x2="178.4" y2="102.29" stroke="#e6e6e6" stroke-width="0.8"/>
<line x1="177.2" y1="104.9" x2="178.4" y2="104.9" stroke="#e6e6e6" stroke-width="0.8"/>
<line x1="176.6" y1="107.52" x2="178.4" y2="107.52" stroke="#e6e6e6" stroke-width="0.8"/>
<line x1="177.2" y1="110.13" x2="178.4" y2="110.13" stroke="#e6e6e6" stroke-width="0.8"/>
<line x1="170.4" y1="112.74" x2="178.4" y2="112.74" stroke="#d8d8d8" stroke-width="0.7"/>
<text x="171.6" y="117.81" font-size="4.5" fill="#b4b4b4" text-anchor="middle">2</text>
<text x="171.6" y="121.66" font-size="4.5" fill="#b4b4b4" text-anchor="middle">0</text>
<text x="171.6" y="125.51" font-size="4.5" fill="#b4b4b4" text-anchor="middle">0</text>
<line x1="177.2" y1="115.35" x2="178.4" y2="115.35" stroke="#e6e6e6" stroke-width="0.8"/>
<line x1="176.6" y1="117.96" x2="178.4" y2="117.96" stroke="#e6e6e6" stroke-width="0.8"/>
<line x1="177.2" y1="120.57" x2="178.4" y2="120.57" stroke="#e6e6e6" stroke-width="0.8"/>
<line x1="176.6" y1="123.18" x2="178.4" y2="123.18" stroke="#e6e6e6" stroke-width="0.8"/>
<line x1="177.2" y1="125.79" x2="178.4" y2="125.79" stroke="#e6e6e6" stroke-width="0.8"/>
<line x1="176.6" y1="128.4" x2="178.4" y2="128.4" stroke="#e6e6e6" stroke-width="0.8"/>
<line x1="177.2" y1="131.01" x2="178.4" y2="131.01" stroke="#e6e6e6" stroke-width="0.8"/>
<line x1="176.6" y1="133.63" x2="178.4" y2="133.63" stroke="#e6e6e6" stroke-width="0.8"/>
<line x1="177.2" y1="136.24" x2="178.4" y2="136.24" stroke="#e6e6e6" stroke-width="0.8"/>
<line x1="170.4" y1="138.85" x2="178.4" y2="138.85" stroke="#d8d8d8" stroke-width="0.7"/>
<text x="171.6" y="143.92" font-size="4.5" fill="#b4b4b4" text-anchor="middle">2</text>
<text x="171.6" y="147.77" font-size="4.5" fill="#b4b4b4" text-anchor="middle">5</text>
<text x="171.6" y="151.62" font-size="4.5" fill="#b4b4b4" text-anchor="middle">0</text>
<line x1="177.2" y1="141.46" x2="178.4" y2="141.46" stroke="#e6e6e6" stroke-width="0.8"/>
<line x1="176.6" y1="144.07" x2="178.4" y2="144.07" stroke="#e6e6e6" stroke-width="0.8"/>
<line x1="177.2" y1="146.68" x2="178.4" y2="146.68" stroke="#e6e6e6" stroke-width="0.8"/>
<line x1="176.6" y1="149.29" x2="178.4" y2="149.29" stroke="#e6e6e6" stroke-width="0.8"/>
<line x1="177.2" y1="151.9" x2="178.4" y2="151.9" stroke="#e6e6e6" stroke-width="0.8"/>
<line x1="176.6" y1="154.51" x2="178.4" y2="154.51" stroke="#e6e6e6" stroke-width="0.8"/>
<line x1="177.2" y1="157.12" x2="178.4" y2="157.12" stroke="#e6e6e6" stroke-width="0.8"/>
<line x1="176.6" y1="159.73" x2="178.4" y2="159.73" stroke="#e6e6e6" stroke-width="0.8"/>
<line x1="177.2" y1="162.35" x2="178.4" y2="162.35" stroke="#e6e6e6" stroke-width="0.8"/>
<line x1="170.4" y1="164.96" x2="178.4" y2="164.96" stroke="#d8d8d8" stroke-width="0.7"/>
<text x="171.6" y="170.03" font-size="4.5" fill="#b4b4b4" text-anchor="middle">3</text>
<text x="171.6" y="173.88" font-size="4.5" fill="#b4b4b4" text-anchor="middle">0</text>
<text x="171.6" y="177.73" font-size="4.5" fill="#b4b4b4" text-anchor="middle">0</text>
<line x1="177.2" y1="167.57" x2="178.4" y2="167.57" stroke="#e6e6e6" stroke-width="0.8"/>
<line x1="176.6" y1="170.18" x2="178.4" y2="170.18" stroke="#e6e6e6" stroke-width="0.8"/>
<line x1="177.2" y1="172.79" x2="178.4" y2="172.79" stroke="#e6e6e6" stroke-width="0.8"/>
<line x1="176.6" y1="175.4" x2="178.4" y2="175.4" stroke="#e6e6e6" stroke-width="0.8"/>
<line x1="177.2" y1="178.01" x2="178.4" y2="178.01" stroke="#e6e6e6" stroke-width="0.8"/>
<line x1="176.6" y1="180.62" x2="178.4" y2="180.62" stroke="#e6e6e6" stroke-width="0.8"/>
<line x1="177.2" y1="183.23" x2="178.4" y2="183.23" stroke="#e6e6e6" stroke-width="0.8"/>
<line x1="176.6" y1="185.84" x2="178.4" y2="185.84" stroke="#e6e6e6" stroke-width="0.8"/>
<line x1="177.2" y1="188.45" x2="178.4" y2="188.45" stroke="#e6e6e6" stroke-width="0.8"/>
<line x1="170.4" y1="191.07" x2="178.4" y2="191.07" stroke="#d8d8d8" stroke-width="0.7"/>
<text x="171.6" y="196.14" font-size="4.5" fill="#b4b4b4" text-anchor="middle">3</text>
<text x="171.6" y="199.99" font-size="4.5" fill="#b4b4b4" text-anchor="middle">5</text>
<text x="171.6" y="203.84" font-size="4.5" fill="#b4b4b4" text-anchor="middle">0</text>
<line x1="177.2" y1="193.68" x2="178.4" y2="193.68" stroke="#e6e6e6" stroke-width="0.8"/>
<line x1="176.6" y1="196.29" x2="178.4" y2="196.29" stroke="#e6e6e6" stroke-width="0.8"/>
<line x1="177.2" y1="198.9" x2="178.4" y2="198.9" stroke="#e6e6e6" stroke-width="0.8"/>
<line x1="176.6" y1="201.51" x2="178.4" y2="201.51" stroke="#e6e6e6" stroke-width="0.8"/>
<line x1="177.2" y1="204.12" x2="178.4" y2="204.12" stroke="#e6e6e6" stroke-width="0.8"/>
<line x1="176.6" y1="206.73" x2="178.4" y2="206.73" stroke="#e6e6e6" stroke-width="0.8"/>
<line x1="177.2" y1="209.34" x2="178.4" y2="209.34" stroke="#e6e6e6" stroke-width="0.8"/>
<line x1="176.6" y1="211.95" x2="178.4" y2="211.95" stroke="#e6e6e6" stroke-width="0.8"/>
<line x1="177.2" y1="214.56" x2="178.4" y2="214.56" stroke="#e6e6e6" stroke-width="0.8"/>
<line x1="170.4" y1="217.18" x2="178.4" y2="217.18" stroke="#d8d8d8" stroke-width="0.7"/>
<text x="171.6" y="222.25" font-size="4.5" fill="#b4b4b4" text-anchor="middle">4</text>
<text x="171.6" y="226.1" font-size="4.5" fill="#b4b4b4" text-anchor="middle">0</text>
<text x="171.6" y="229.95" font-size="4.5" fill="#b4b4b4" text-anchor="middle">0</text>
<line x1="177.2" y1="219.79" x2="178.4" y2="219.79" stroke="#e6e6e6" stroke-width="0.8"/>
<line x1="176.6" y1="222.4" x2="178.4" y2="222.4" stroke="#e6e6e6" stroke-width="0.8"/>
<line x1="177.2" y1="225.01" x2="178.4" y2="225.01" stroke="#e6e6e6" stroke-width="0.8"/>
<line x1="176.6" y1="227.62" x2="178.4" y2="227.62" stroke="#e6e6e6" stroke-width="0.8"/>
<line x1="177.2" y1="230.23" x2="178.4" y2="230.23" stroke="#e6e6e6" stroke-width="0.8"/>
<line x1="176.6" y1="232.84" x2="178.4" y2="232.84" stroke="#e6e6e6" stroke-width="0.8"/>
<line x1="177.2" y1="235.45" x2="178.4" y2="235.45" stroke="#e6e6e6" stroke-width="0.8"/>
<line x1="176.6" y1="238.06" x2="178.4" y2="238.06" stroke="#e6e6e6" stroke-width="0.8"/>
<line x1="177.2" y1="240.67" x2="178.4" y2="240.67" stroke="#e6e6e6" stroke-width="0.8"/>
<line x1="170.4" y1="243.28" x2="178.4" y2="243.28" stroke="#d8d8d8" stroke-width="0.7"/>
<text x="171.6" y="248.36" font-size="4.5" fill="#b4b4b4" text-anchor="middle">4</text>
<text x="171.6" y="252.21" font-size="4.5" fill="#b4b4b4" text-anchor="middle">5</text>
<text x="171.6" y="256.06" font-size="4.5" fill="#b4b4b4" text-anchor="middle">0</text>
<line x1="177.2" y1="245.9" x2="178.4" y2="245.9" stroke="#e6e6e6" stroke-width="0.8"/>
<line x1="176.6" y1="248.51" x2="178.4" y2="248.51" stroke="#e6e6e6" stroke-width="0.8"/>
<line x1="177.2" y1="251.12" x2="178.4" y2="251.12" stroke="#e6e6e6" stroke-width="0.8"/>
<line x1="176.6" y1="253.73" x2="178.4" y2="253.73" stroke="#e6e6e6" stroke-width="0.8"/>
<line x1="177.2" y1="256.34" x2="178.4" y2="256.34" stroke="#e6e6e6" stroke-width="0.8"/>
<line x1="176.6" y1="258.95" x2="178.4" y2="258.95" stroke="#e6e6e6" stroke-width="0.8"/>
<line x1="177.2" y1="261.56" x2="178.4" y2="261.56" stroke="#e6e6e6" stroke-width="0.8"/>
<line x1="176.6" y1="264.17" x2="178.4" y2="264.17" stroke="#e6e6e6" stroke-width="0.8"/>
<line x1="177.2" y1="266.78" x2="178.4" y2="266.78" stroke="#e6e6e6" stroke-width="0.8"/>
<line x1="170.4" y1="269.39" x2="178.4" y2="269.39" stroke="#d8d8d8" stroke-width="0.7"/>
<text x="171.6" y="274.47" font-size="4.5" fill="#b4b4b4" text-anchor="middle">5</text>
<text x="171.6" y="278.32" font-size="4.5" fill="#b4b4b4" text-anchor="middle">0</text>
<text x="171.6" y="282.17" font-size="4.5" fill="#b4b4b4" text-anchor="middle">0</text>
<line x1="177.2" y1="272" x2="178.4" y2="272" stroke="#e6e6e6" stroke-width="0.8"/>
<line x1="176.6" y1="274.62" x2="178.4" y2="274.62" stroke="#e6e6e6" stroke-width="0.8"/>
<line x1="177.2" y1="277.23" x2="178.4" y2="277.23" stroke="#e6e6e6" stroke-width="0.8"/>
<line x1="176.6" y1="279.84" x2="178.4" y2="279.84" stroke="#e6e6e6" stroke-width="0.8"/>
<line x1="177.2" y1="282.45" x2="178.4" y2="282.45" stroke="#e6e6e6" stroke-width="0.8"/>
<line x1="176.6" y1="285.06" x2="178.4" y2="285.06" stroke="#e6e6e6" stroke-width="0.8"/>
<line x1="177.2" y1="287.67" x2="178.4" y2="287.67" stroke="#e6e6e6" stroke-width="0.8"/>
<line x1="176.6" y1="290.28" x2="178.4" y2="290.28" stroke="#e6e6e6" stroke-width="0.8"/>
<line x1="177.2" y1="292.89" x2="178.4" y2="292.89" stroke="#e6e6e6" stroke-width="0.8"/>
<line x1="170.4" y1="295.5" x2="178.4" y2="295.5" stroke="#d8d8d8" stroke-width="0.7"/>
<text x="171.6" y="300.58" font-size="4.5" fill="#b4b4b4" text-anchor="middle">5</text>
<text x="171.6" y="304.43" font-size="4.5" fill="#b4b4b4" text-anchor="middle">5</text>
<text x="171.6" y="308.28" font-size="4.5" fill="#b4b4b4" text-anchor="middle">0</text>
<line x1="177.2" y1="298.11" x2="178.4" y2="298.11" stroke="#e6e6e6" stroke-width="0.8"/>
<line x1="176.6" y1="300.73" x2="178.4" y2="300.73" stroke="#e6e6e6" stroke-width="0.8"/>
<line x1="177.2" y1="303.34" x2="178.4" y2="303.34" stroke="#e6e6e6" stroke-width="0.8"/>
<line x1="176.6" y1="305.95" x2="178.4" y2="305.95" stroke="#e6e6e6" stroke-width="0.8"/>
<line x1="177.2" y1="308.56" x2="178.4" y2="308.56" stroke="#e6e6e6" stroke-width="0.8"/>
<line x1="176.6" y1="311.17" x2="178.4" y2="311.17" stroke="#e6e6e6" stroke-width="0.8"/>
<line x1="177.2" y1="313.78" x2="178.4" y2="313.78" stroke="#e6e6e6" stroke-width="0.8"/>
<line x1="176.6" y1="316.39" x2="178.4" y2="316.39" stroke="#e6e6e6" stroke-width="0.8"/>
<line x1="177.2" y1="319" x2="178.4" y2="319" stroke="#e6e6e6" stroke-width="0.8"/>
<rect x="177.5" y="50.3" width="0.9" height="270.1" fill="#e0e0e0" fill-opacity="0.75"/>
<rect x="169.6" y="43" width="8.8" height="7.3" fill="#000000"/>
<line x1="169.6" y1="49.6" x2="178.4" y2="49.6" stroke="#e8e8e8" stroke-width="0.9"/>
<line x1="177.6" y1="43" x2="177.6" y2="50.3" stroke="#e8e8e8" stroke-width="0.9"/>
<path d="M172,45 L172,47.6 M174.2,45 L174.2,47.6" fill="none" stroke="#bdbdbd" stroke-width="0.5" stroke-dasharray="0.7 0.6"/>
<line x1="472.6" y1="43.6" x2="472.6" y2="49" stroke="#3f7fb4" stroke-width="0.8"/>
<line x1="169.8" y1="287.6" x2="177" y2="287.6" stroke="#2f6fa8" stroke-width="0.8"/>
<rect x="169.6" y="320.4" width="716.4" height="1" fill="#1b1b1b"/>
<rect x="169.6" y="321.4" width="716.6" height="11.4" fill="#2a2a2a"/>
<rect x="172.6" y="323.8" width="4.8" height="4.2" fill="none" rx="0.6" stroke="#c4c4c4" stroke-width="0.9"/>
<rect x="174.8" y="325.8" width="5" height="4.4" fill="#c4c4c4" rx="0.6"/>
<rect x="176" y="327" width="2.6" height="2" fill="#2a2a2a"/>
<rect x="184" y="323.4" width="7" height="5.2" fill="none" rx="0.6" stroke="#d6d6d6" stroke-width="0.95"/>
<rect x="186.2" y="329.6" width="2.6" height="1" fill="#d6d6d6"/>
<line x1="187.5" y1="328.6" x2="187.5" y2="330" stroke="#d6d6d6" stroke-width="0.9"/>
<rect x="194.4" y="322.6" width="34" height="8.8" fill="#1b1b1b" rx="0.8"/>
<text x="197" y="329.31" font-size="6.6" fill="#dcdcdc" textLength="14.4" lengthAdjust="spacingAndGlyphs" stroke="#dcdcdc" stroke-width="0.22">100%</text>
<path d="M222,325.8 L224.2,328 L226.4,325.8" fill="none" stroke="#c8c8c8" stroke-width="0.95"/>
<rect x="231.6" y="323" width="6.8" height="5.4" fill="none" rx="0.5" stroke="#d6d6d6" stroke-width="0.9"/>
<line x1="235" y1="322.4" x2="235" y2="329.8" stroke="#d6d6d6" stroke-width="0.8"/>
<path d="M237,329.8 l1.4,0 l0,1.4 z" fill="#9a9a9a"/>
<rect x="241.6" y="322.6" width="10" height="8.8" fill="#1d1d1d" rx="0.8"/>
<path d="M243,330 L243,326.4 L246,323.6 L250.4,324.2 L250.4,330" fill="none" stroke="#2d9fea" stroke-width="0.95"/>
<path d="M243,330 L250.4,330" fill="none" stroke="#2d9fea" stroke-width="0.9" stroke-dasharray="1 0.8"/>
<rect x="253.4" y="322.6" width="33.6" height="8.8" fill="#1b1b1b" rx="0.8"/>
<text x="255.4" y="329.31" font-size="6.6" fill="#d4d4d4" textLength="30" lengthAdjust="spacingAndGlyphs" stroke="#d4d4d4" stroke-width="0.22">0;00;01;13</text>
<rect x="291" y="324.6" width="7.4" height="5.4" fill="#d6d6d6" rx="0.8"/>
<rect x="293.2" y="323.6" width="2.8" height="1.2" fill="#d6d6d6"/>
<circle cx="294.7" cy="327.3" r="1.6" fill="#282828"/>
<circle cx="294.7" cy="327.3" r="0.8" fill="#d6d6d6"/>
<path d="M303.6,329 L306,326.4 M307,328 L309.6,325" fill="none" stroke="#4c4c4c" stroke-width="2" stroke-linecap="round"/>
<circle cx="317.4" cy="325.6" r="2" fill="#3bb54a"/>
<circle cx="315.8" cy="328.2" r="2" fill="#d8402f"/>
<circle cx="319" cy="328.2" r="2" fill="#2d7fd8"/>
<path d="M320.6,330.2 l1.4,0 l0,1.4 z" fill="#9a9a9a"/>
<rect x="325" y="322.6" width="43" height="8.8" fill="#1b1b1b" rx="0.8"/>
<text x="327.2" y="329.31" font-size="6.6" fill="#dcdcdc" textLength="9.8" lengthAdjust="spacingAndGlyphs" stroke="#dcdcdc" stroke-width="0.22">Full</text>
<path d="M362.4,325.8 L364.6,328 L366.8,325.8" fill="none" stroke="#c8c8c8" stroke-width="0.95"/>
<rect x="372.2" y="323.6" width="7.4" height="6.8" fill="none" rx="0.6" stroke="#d6d6d6" stroke-width="0.95"/>
<rect x="374.2" y="325.6" width="3.6" height="2.8" fill="#d6d6d6"/>
<rect x="383" y="323.4" width="8.6" height="7.2" fill="#1f3a52" rx="0.6" stroke="#2d9fea" stroke-width="0.95"/>
<path d="M384.6,325 L387,327 L384.6,329 Z M390,325 L387.6,327 L390,329 Z" fill="#2d9fea"/>
<rect x="394.8" y="322.6" width="52.8" height="8.8" fill="#1b1b1b" rx="0.8"/>
<text x="397.2" y="329.31" font-size="6.6" fill="#dcdcdc" textLength="39.4" lengthAdjust="spacingAndGlyphs" stroke="#dcdcdc" stroke-width="0.22">Active Camera</text>
<path d="M441.8,325.8 L444,328 L446.2,325.8" fill="none" stroke="#c8c8c8" stroke-width="0.95"/>
<rect x="451.8" y="322.6" width="34" height="8.8" fill="#1b1b1b" rx="0.8"/>
<text x="454.6" y="329.31" font-size="6.6" fill="#dcdcdc" textLength="17.6" lengthAdjust="spacingAndGlyphs" stroke="#dcdcdc" stroke-width="0.22">1 View</text>
<path d="M480,325.8 L482.2,328 L484.4,325.8" fill="none" stroke="#c8c8c8" stroke-width="0.95"/>
<rect x="490.4" y="325.4" width="6.6" height="4.4" fill="none" rx="0.8" stroke="#d6d6d6" stroke-width="0.9"/>
<circle cx="493.7" cy="327.6" r="1.1" fill="#d6d6d6"/>
<path d="M489.8,323.6 L492,323.6 M495.4,323.6 L497.6,323.6 M489.8,323.6 l0,1 M497.6,323.6 l0,1" fill="none" stroke="#d6d6d6" stroke-width="0.9"/>
<rect x="501.4" y="323.6" width="7.2" height="6.4" fill="none" rx="0.7" stroke="#d6d6d6" stroke-width="0.95"/>
<path d="M504,325 L504,328.6 L506.4,328.6 M505.4,324.8 L506.6,326 L505.4,327.2" fill="none" stroke="#d6d6d6" stroke-width="0.8"/>
<path d="M513,329.6 L513,325.4 L520.4,325.4 L520.4,329.6" fill="none" stroke="#d6d6d6" stroke-width="0.95"/>
<rect x="513" y="328.6" width="7.4" height="1.2" fill="#d6d6d6"/>
<rect x="515" y="323.6" width="3.4" height="3" fill="#d6d6d6"/>
<rect x="526.4" y="323.4" width="3.2" height="2.6" fill="#d6d6d6"/>
<rect x="524.4" y="327.4" width="3" height="2.6" fill="#d6d6d6"/>
<rect x="528.6" y="327.4" width="3" height="2.6" fill="#d6d6d6"/>
<path d="M528,326 L525.9,327.6 M528,326 L530.1,327.6" fill="none" stroke="#d6d6d6" stroke-width="0.8"/>
<circle cx="540.5" cy="326.8" r="2.7" fill="none" stroke="#d6d6d6" stroke-width="1.5"/>
<path d="M540.5,323 L540.5,324.2 M540.5,329.4 L540.5,330.6 M536.7,326.8 L537.9,326.8 M543.1,326.8 L544.3,326.8" fill="none" stroke="#282828" stroke-width="0.8"/>
<text x="547.8" y="329.38" font-size="6.8" fill="#2d9fea" font-weight="700" textLength="13.4" lengthAdjust="spacingAndGlyphs" stroke="#2d9fea" stroke-width="0.22">+0.0</text>
<rect x="995.6" y="15" width="4.4" height="318" fill="#2b2b2b"/>
<rect x="995.6" y="15" width="0.9" height="318" fill="#161616"/>
<rect x="888.4" y="14.9" width="107.2" height="14.06" fill="#2b2b2b"/>
<text x="894.4" y="24.78" font-size="6.8" fill="#d6d6d6" textLength="9.6" lengthAdjust="spacingAndGlyphs" stroke="#d6d6d6" stroke-width="0.22">Info</text>
<rect x="888.4" y="30.56" width="107.2" height="14.06" fill="#2b2b2b"/>
<text x="894.4" y="40.44" font-size="6.8" fill="#d6d6d6" textLength="16.6" lengthAdjust="spacingAndGlyphs" stroke="#d6d6d6" stroke-width="0.22">Audio</text>
<rect x="888.4" y="46.22" width="107.2" height="14.06" fill="#2b2b2b"/>
<text x="894.4" y="56.1" font-size="6.8" fill="#d6d6d6" textLength="45.6" lengthAdjust="spacingAndGlyphs" stroke="#d6d6d6" stroke-width="0.22">Effects &amp; Presets</text>
<rect x="888.4" y="61.88" width="107.2" height="14.06" fill="#2b2b2b"/>
<text x="894.4" y="71.76" font-size="6.8" fill="#d6d6d6" textLength="14.4" lengthAdjust="spacingAndGlyphs" stroke="#d6d6d6" stroke-width="0.22">Align</text>
<rect x="888.4" y="77.54" width="107.2" height="130.46" fill="#2b2b2b"/>
<text x="894.4" y="87.48" font-size="6.8" fill="#d6d6d6" textLength="27" lengthAdjust="spacingAndGlyphs" stroke="#d6d6d6" stroke-width="0.22">Character</text>
<rect x="985.8" y="83.3" width="4.4" height="0.8" fill="#8a8a8a"/>
<rect x="985.8" y="84.75" width="4.4" height="0.8" fill="#8a8a8a"/>
<rect x="985.8" y="86.2" width="4.4" height="0.8" fill="#8a8a8a"/>
<rect x="891.8" y="97.7" width="62.2" height="8.2" fill="#1a1a1a" rx="0.8"/>
<line x1="945.2" y1="98" x2="945.2" y2="105.6" stroke="#272727" stroke-width="0.8"/>
<text x="894.2" y="104.21" font-size="6.6" fill="#e8e8e8" font-weight="700" textLength="22.6" lengthAdjust="spacingAndGlyphs" stroke="#e8e8e8" stroke-width="0.22">Sanchez</text>
<path d="M947.4,100.8 L949.6,103 L951.8,100.8" fill="none" stroke="#c8c8c8" stroke-width="0.95"/>
<rect x="891.8" y="110" width="62.2" height="8.2" fill="#1a1a1a" rx="0.8"/>
<line x1="945.2" y1="110.3" x2="945.2" y2="117.9" stroke="#272727" stroke-width="0.8"/>
<text x="894.2" y="116.51" font-size="6.6" fill="#e8e8e8" font-weight="700" textLength="21.4" lengthAdjust="spacingAndGlyphs" stroke="#e8e8e8" stroke-width="0.22">Regular</text>
<path d="M947.4,113.1 L949.6,115.3 L951.8,113.1" fill="none" stroke="#c8c8c8" stroke-width="0.95"/>
<path d="M959,106.4 L959.4,104.4 L964,99.8 L965.6,101.4 L961,106 Z" fill="none" stroke="#d8d8d8" stroke-width="0.9"/>
<path d="M964,98.6 L966.8,101.4 L968,100.2 C968.6,99.2 967,97.4 965.6,97.6 Z" fill="#d8d8d8"/>
<rect x="978.4" y="104.4" width="14" height="14" fill="#f2f2f2"/>
<rect x="981.6" y="107.6" width="7.6" height="7.6" fill="#141414"/>
<line x1="978.4" y1="118.4" x2="992.4" y2="104.4" stroke="#e02020" stroke-width="0.9"/>
<rect x="970.2" y="97" width="15.1" height="14.2" fill="#5c5c5c"/>
<rect x="970.2" y="97" width="15.1" height="14.2" fill="none" stroke="#3a3a3a" stroke-width="0.6"/>
<path d="M987.6,98.6 C989.8,98.4 990.8,100 990.6,102.6" fill="none" stroke="#e6e6e6" stroke-width="0.9"/>
<path d="M986,98.6 L988.2,97 L988.2,100.2 Z M989.2,101.8 L992,101.8 L990.6,103.8 Z" fill="#e6e6e6"/>
<rect x="957" y="110" width="11" height="4.2" fill="#0e0e0e"/>
<rect x="957" y="114.2" width="11" height="4.2" fill="#f2f2f2"/>
<rect x="957" y="110" width="11" height="8.4" fill="none" stroke="#dcdcdc" stroke-width="0.7"/>
<rect x="970.5" y="112.6" width="5.7" height="5.8" fill="#f2f2f2"/>
<line x1="970.5" y1="118.4" x2="976.2" y2="112.6" stroke="#e02020" stroke-width="0.7"/>
<text x="891.2" y="131.6" font-size="6" fill="#e6e6e6" font-weight="700" font-family='"Liberation Serif", serif' stroke="#e6e6e6" stroke-width="0.22">T</text>
<text x="894.6" y="131.79" font-size="9.4" fill="#e6e6e6" font-weight="700" font-family='"Liberation Serif", serif' stroke="#e6e6e6" stroke-width="0.22">T</text>
<text x="903.8" y="131.01" font-size="6.6" fill="#2d9fea" textLength="9" lengthAdjust="spacingAndGlyphs" stroke="#2d9fea" stroke-width="0.22">150</text>
<text x="914.2" y="130.83" font-size="6.1" fill="#bababa" textLength="7.8" lengthAdjust="spacingAndGlyphs" stroke="#bababa" stroke-width="0.22">px</text>
<path d="M927,127.5 l3.6,0 l-1.8,2.6 z" fill="#cfcfcf"/>
<path d="M950.8,124.6 L953.2,128 L948.4,128 Z" fill="none" stroke="#e6e6e6" stroke-width="0.8"/>
<path d="M950.8,128 L954.6,133.6 L947,133.6 Z" fill="none" stroke="#e6e6e6" stroke-width="0.8"/>
<path d="M946.2,127.4 L946.2,133.6" fill="none" stroke="#e6e6e6" stroke-width="0.7" stroke-dasharray="1.2 0.8"/>
<text x="962" y="131.01" font-size="6.6" fill="#2d9fea" textLength="10.6" lengthAdjust="spacingAndGlyphs" stroke="#2d9fea" stroke-width="0.22">140</text>
<text x="975" y="130.83" font-size="6.1" fill="#bababa" textLength="7.4" lengthAdjust="spacingAndGlyphs" stroke="#bababa" stroke-width="0.22">px</text>
<path d="M986.2,127.5 l3.6,0 l-1.8,2.6 z" fill="#cfcfcf"/>
<text x="890.6" y="142.36" font-size="7.6" fill="#e6e6e6" stroke="#e6e6e6" stroke-width="0.22">V</text>
<text x="894.6" y="142.96" font-size="7.6" fill="#e6e6e6" stroke="#e6e6e6" stroke-width="0.22">A</text>
<path d="M893.2,144.8 L898,144.8 M893.2,144.8 l1.2,-0.9 M893.2,144.8 l1.2,0.9" fill="none" stroke="#e6e6e6" stroke-width="0.6"/>
<text x="904" y="142.01" font-size="6.6" fill="#747474" textLength="19" lengthAdjust="spacingAndGlyphs" stroke="#747474" stroke-width="0.22">Optical</text>
<path d="M927,138.5 l3.6,0 l-1.8,2.6 z" fill="#cfcfcf"/>
<rect x="945.8" y="136" width="11.2" height="7.4" fill="#cfcfcf" rx="0.5"/>
<text x="951.4" y="141.76" font-size="5.6" fill="#222" font-weight="700" text-anchor="middle" textLength="9" lengthAdjust="spacingAndGlyphs" stroke="#222" stroke-width="0.22">VA</text>
<path d="M946.2,145.2 L956.6,145.2" fill="none" stroke="#e6e6e6" stroke-width="0.8" stroke-dasharray="1.2 1.2"/>
<text x="962" y="142.01" font-size="6.6" fill="#2d9fea" stroke="#2d9fea" stroke-width="0.22">0</text>
<path d="M986.2,138.5 l3.6,0 l-1.8,2.6 z" fill="#cfcfcf"/>
<line x1="891.8" y1="148.3" x2="992.4" y2="148.3" stroke="#1b1b1b" stroke-width="0.9"/>
<rect x="891.4" y="152.6" width="8.4" height="1" fill="#e6e6e6"/>
<rect x="891.4" y="155.3" width="8.4" height="1.6" fill="#e6e6e6"/>
<rect x="891.4" y="158" width="8.4" height="1" fill="#e6e6e6"/>
<text x="904" y="158.31" font-size="6.6" fill="#2d9fea" stroke="#2d9fea" stroke-width="0.22">-</text>
<text x="908.4" y="158.13" font-size="6.1" fill="#bababa" textLength="7.8" lengthAdjust="spacingAndGlyphs" stroke="#bababa" stroke-width="0.22">px</text>
<path d="M927,154.8 l3.6,0 l-1.8,2.6 z" fill="#cfcfcf"/>
<rect x="934" y="152" width="58.4" height="8" fill="#1a1a1a" rx="0.8"/>
<path d="M985.8,155 L988,157.2 L990.2,155" fill="none" stroke="#c8c8c8" stroke-width="0.95"/>
<line x1="891.8" y1="164.6" x2="992.4" y2="164.6" stroke="#1b1b1b" stroke-width="0.9"/>
<path d="M892,167.6 L892,175.4 M892,167.6 l-0.9,1.2 M892,167.6 l0.9,1.2 M892,175.4 l-0.9,-1.2 M892,175.4 l0.9,-1.2" fill="none" stroke="#e6e6e6" stroke-width="0.6"/>
<text x="893.6" y="174.79" font-size="9.4" fill="#e6e6e6" font-weight="700" font-family='"Liberation Serif", serif' stroke="#e6e6e6" stroke-width="0.22">T</text>
<text x="903.8" y="173.81" font-size="6.6" fill="#2d9fea" textLength="10" lengthAdjust="spacingAndGlyphs" stroke="#2d9fea" stroke-width="0.22">100</text>
<text x="914.6" y="173.63" font-size="6.1" fill="#bababa" textLength="5.4" lengthAdjust="spacingAndGlyphs" stroke="#bababa" stroke-width="0.22">%</text>
<path d="M927,170.3 l3.6,0 l-1.8,2.6 z" fill="#cfcfcf"/>
<text x="947.4" y="173.99" font-size="9.4" fill="#e6e6e6" font-weight="700" font-family='"Liberation Serif", serif' stroke="#e6e6e6" stroke-width="0.22">T</text>
<path d="M947,176.4 L955.6,176.4 M947,176.4 l1.2,-0.9 M947,176.4 l1.2,0.9 M955.6,176.4 l-1.2,-0.9 M955.6,176.4 l-1.2,0.9" fill="none" stroke="#e6e6e6" stroke-width="0.6"/>
<text x="962" y="173.81" font-size="6.6" fill="#2d9fea" textLength="10.4" lengthAdjust="spacingAndGlyphs" stroke="#2d9fea" stroke-width="0.22">100</text>
<text x="973.2" y="173.63" font-size="6.1" fill="#bababa" textLength="5.4" lengthAdjust="spacingAndGlyphs" stroke="#bababa" stroke-width="0.22">%</text>
<path d="M986.2,170.3 l3.6,0 l-1.8,2.6 z" fill="#cfcfcf"/>
<text x="890.8" y="185.35" font-size="7" fill="#e6e6e6" stroke="#e6e6e6" stroke-width="0.22">A</text>
<text x="895.4" y="183.05" font-size="5" fill="#e6e6e6" stroke="#e6e6e6" stroke-width="0.22">a</text>
<path d="M897.4,181 L897.4,186.4 M897.4,186.4 l-0.8,-1 M897.4,186.4 l0.8,-1" fill="none" stroke="#e6e6e6" stroke-width="0.6"/>
<text x="904" y="185.01" font-size="6.6" fill="#2d9fea" stroke="#2d9fea" stroke-width="0.22">0</text>
<text x="908.8" y="184.83" font-size="6.1" fill="#bababa" textLength="7.8" lengthAdjust="spacingAndGlyphs" stroke="#bababa" stroke-width="0.22">px</text>
<path d="M927,181.5 l3.6,0 l-1.8,2.6 z" fill="#cfcfcf"/>
<rect x="947.4" y="179.4" width="8.2" height="6" fill="#7c7c7c" rx="0.4"/>
<text x="951.5" y="184.21" font-size="4.6" fill="#e8e8e8" text-anchor="middle" font-family='"Noto Sans CJK JP", sans-serif' stroke="#e8e8e8" stroke-width="0.22">あ</text>
<path d="M947.4,187.2 L955.6,187.2" fill="none" stroke="#e6e6e6" stroke-width="0.8" stroke-dasharray="1.2 1.6"/>
<text x="962" y="185.01" font-size="6.6" fill="#2d9fea" stroke="#2d9fea" stroke-width="0.22">0</text>
<text x="966.6" y="184.83" font-size="6.1" fill="#bababa" textLength="5.4" lengthAdjust="spacingAndGlyphs" stroke="#bababa" stroke-width="0.22">%</text>
<path d="M986.2,181.5 l3.6,0 l-1.8,2.6 z" fill="#cfcfcf"/>
<line x1="891.8" y1="191.5" x2="992.4" y2="191.5" stroke="#1b1b1b" stroke-width="0.9"/>
<text x="907.4" y="202.57" font-size="8.2" fill="#e6e6e6" font-weight="700" text-anchor="middle" font-family='"Liberation Serif", serif' stroke="#e6e6e6" stroke-width="0.22">T</text>
<text x="920" y="202.57" font-size="8.2" fill="#e6e6e6" font-weight="700" text-anchor="middle" font-family='"Liberation Serif", serif' font-style="italic" stroke="#e6e6e6" stroke-width="0.22">T</text>
<text x="935.8" y="202.57" font-size="8.2" fill="#e6e6e6" font-weight="700" text-anchor="middle" font-family='"Liberation Serif", serif' textLength="9.4" lengthAdjust="spacingAndGlyphs" stroke="#e6e6e6" stroke-width="0.22">TT</text>
<text x="946.6" y="202.57" font-size="8.2" fill="#e6e6e6" font-weight="700" text-anchor="middle" font-family='"Liberation Serif", serif' stroke="#e6e6e6" stroke-width="0.22">T</text>
<text x="951.4" y="202.5" font-size="6" fill="#e6e6e6" font-weight="700" text-anchor="middle" font-family='"Liberation Serif", serif' stroke="#e6e6e6" stroke-width="0.22">T</text>
<text x="962.8" y="202.57" font-size="8.2" fill="#e6e6e6" font-weight="700" text-anchor="middle" font-family='"Liberation Serif", serif' stroke="#e6e6e6" stroke-width="0.22">T</text>
<text x="967.6" y="198.96" font-size="3.6" fill="#e6e6e6" font-weight="700" text-anchor="middle" font-family='"Liberation Serif", serif' stroke="#e6e6e6" stroke-width="0.22">1</text>
<text x="976.4" y="202.57" font-size="8.2" fill="#e6e6e6" font-weight="700" text-anchor="middle" font-family='"Liberation Serif", serif' stroke="#e6e6e6" stroke-width="0.22">T</text>
<text x="981.2" y="202.96" font-size="3.6" fill="#e6e6e6" font-weight="700" text-anchor="middle" font-family='"Liberation Serif", serif' stroke="#e6e6e6" stroke-width="0.22">1</text>
<rect x="888.4" y="209.8" width="107.2" height="14.06" fill="#2b2b2b"/>
<text x="894.4" y="219.78" font-size="6.8" fill="#d6d6d6" textLength="28" lengthAdjust="spacingAndGlyphs" stroke="#d6d6d6" stroke-width="0.22">Paragraph</text>
<rect x="888.4" y="225.46" width="107.2" height="14.06" fill="#2b2b2b"/>
<text x="894.4" y="235.44" font-size="6.8" fill="#d6d6d6" textLength="20.6" lengthAdjust="spacingAndGlyphs" stroke="#d6d6d6" stroke-width="0.22">Tracker</text>
<rect x="888.4" y="241.12" width="107.2" height="14.06" fill="#2b2b2b"/>
<text x="894.4" y="251.1" font-size="6.8" fill="#d6d6d6" textLength="13.6" lengthAdjust="spacingAndGlyphs" stroke="#d6d6d6" stroke-width="0.22">Paint</text>
<rect x="888.4" y="256.78" width="107.2" height="14.06" fill="#2b2b2b"/>
<text x="894.4" y="266.76" font-size="6.8" fill="#d6d6d6" textLength="21.8" lengthAdjust="spacingAndGlyphs" stroke="#d6d6d6" stroke-width="0.22">Brushes</text>
<rect x="888.4" y="272.44" width="107.2" height="14.06" fill="#2b2b2b"/>
<text x="894.4" y="282.42" font-size="6.8" fill="#d6d6d6" textLength="39.4" lengthAdjust="spacingAndGlyphs" stroke="#d6d6d6" stroke-width="0.22">Motion Sketch</text>
<rect x="888.4" y="288.1" width="107.2" height="14.06" fill="#2b2b2b"/>
<text x="894.4" y="298.08" font-size="6.8" fill="#d6d6d6" textLength="27" lengthAdjust="spacingAndGlyphs" stroke="#d6d6d6" stroke-width="0.22">Smoother</text>
<rect x="888.4" y="303.76" width="107.2" height="14.06" fill="#2b2b2b"/>
<text x="894.4" y="313.74" font-size="6.8" fill="#d6d6d6" textLength="21.2" lengthAdjust="spacingAndGlyphs" stroke="#d6d6d6" stroke-width="0.22">Wiggler</text>
<rect x="888.4" y="319.42" width="107.2" height="13.58" fill="#2b2b2b"/>
<text x="894.4" y="329.4" font-size="6.8" fill="#d6d6d6" textLength="52.4" lengthAdjust="spacingAndGlyphs" stroke="#d6d6d6" stroke-width="0.22">Mask Interpolation</text>
<rect x="12.8" y="339.6" width="5.9" height="5.7" fill="#d9b98c" rx="0.5"/>
<path d="M15.75,339.6 L15.75,345.3 M12.8,342.4 L18.7,342.4" fill="none" stroke="#b8966a" stroke-width="0.5"/>
<text x="24.8" y="344.88" font-size="6.8" fill="#c0c0c0" textLength="55.2" lengthAdjust="spacingAndGlyphs" stroke="#c0c0c0" stroke-width="0.22">Envelope Animation</text>
<path d="M100.6,341 L103.4,343.8 M103.4,341 L100.6,343.8" fill="none" stroke="#a0a0a0" stroke-width="0.8"/>
<rect x="107.6" y="339.6" width="5.8" height="5.7" fill="#d9b98c" rx="0.5"/>
<path d="M110.5,339.6 L110.5,345.3 M107.6,342.4 L113.4,342.4" fill="none" stroke="#b8966a" stroke-width="0.5"/>
<text x="119" y="344.88" font-size="6.8" fill="#e6e6e6" textLength="23.6" lengthAdjust="spacingAndGlyphs" stroke="#e6e6e6" stroke-width="0.22">Example</text>
<rect x="147.6" y="340.7" width="4" height="0.8" fill="#8a8a8a"/>
<rect x="147.6" y="342.15" width="4" height="0.8" fill="#8a8a8a"/>
<rect x="147.6" y="343.6" width="4" height="0.8" fill="#8a8a8a"/>
<rect x="100" y="347.4" width="53" height="0.9" fill="#b4b4b4"/>
<text x="6.8" y="359.41" font-size="10.6" fill="#2d9fea" font-weight="700" textLength="42.6" lengthAdjust="spacingAndGlyphs" stroke="#2d9fea" stroke-width="0.22">0;00;01;13</text>
<text x="5.2" y="365.43" font-size="5.8" fill="#1f6fae" textLength="46" lengthAdjust="spacingAndGlyphs" stroke="#1f6fae" stroke-width="0.22">00043 (29.97 fps)</text>
<rect x="57.8" y="354.3" width="186.8" height="8.7" fill="#181818" rx="1"/>
<circle cx="63.8" cy="358" r="1.9" fill="none" stroke="#d0d0d0" stroke-width="0.9"/>
<line x1="62.4" y1="359.6" x2="60.6" y2="361.4" stroke="#d0d0d0" stroke-width="1.1"/>
<path d="M66.6,359.4 l2.2,0 l-1.1,1.3 z" fill="#c0c0c0"/>
<path d="M254.8,357 L258,357 L260.6,360 L262.4,360 M258,357 L262.4,357" fill="none" stroke="#d4d4d4" stroke-width="0.9"/>
<rect x="253.4" y="355.8" width="2.6" height="2.4" fill="#d4d4d4"/>
<rect x="261" y="355.8" width="2.2" height="2.4" fill="#d4d4d4"/>
<rect x="261" y="358.8" width="2.2" height="2.4" fill="#d4d4d4"/>
<circle cx="272.8" cy="355.8" r="1.5" fill="#d4d4d4"/>
<path d="M272.8,355.8 L276,358.4" fill="none" stroke="#d4d4d4" stroke-width="0.9"/>
<circle cx="277.4" cy="359.8" r="2.7" fill="none" stroke="#d4d4d4" stroke-width="1"/>
<path d="M277.4,358 L277.4,361.8 M275.6,360.4 L279.2,360.4" fill="none" stroke="#d4d4d4" stroke-width="0.6"/>
<path d="M289,360.6 L289,358.4 L292.8,355.8 L296.8,358.4 L296.8,360.6 Z" fill="none" stroke="#d4d4d4" stroke-width="0.9"/>
<rect x="288.4" y="360.6" width="9" height="1.2" fill="#d4d4d4"/>
<rect x="291.4" y="358.2" width="3" height="2.4" fill="#d4d4d4"/>
<rect x="305.4" y="354.8" width="5.8" height="5.2" fill="#d4d4d4" rx="0.4"/>
<rect x="303" y="356.8" width="6" height="5.6" fill="#2b2b2b" rx="0.4"/>
<rect x="303.5" y="357.3" width="5" height="4.6" fill="none" rx="0.3" stroke="#d4d4d4" stroke-width="0.9"/>
<rect x="305.2" y="358.8" width="1.8" height="1.8" fill="#d4d4d4"/>
<path d="M317.6,361 L322.6,356" fill="none" stroke="#d4d4d4" stroke-width="3.4" stroke-linecap="round"/>
<path d="M318.4,360.2 L321.8,356.8" fill="none" stroke="#262626" stroke-width="1" stroke-linecap="round"/>
<rect x="334.4" y="354.8" width="8.6" height="7.6" fill="none" rx="1.4" stroke="#d4d4d4" stroke-width="1"/>
<path d="M336.2,356.6 L341.4,360.8" fill="none" stroke="#d4d4d4" stroke-width="1"/>
<path d="M336.4,354.8 L336.4,353.8 M340.8,354.8 L340.8,353.8" fill="none" stroke="#d4d4d4" stroke-width="1"/>
<rect x="0" y="367" width="350.4" height="1.6" fill="#1c1c1c"/>
<rect x="0" y="368.6" width="350.4" height="9.3" fill="#303030"/>
<path d="M2.4,373.7 C4,371.1 7.6,371.1 9.2,373.7 C7.6,376.3 4,376.3 2.4,373.7 Z" fill="#e4e4e4"/>
<circle cx="5.8" cy="373.7" r="1.25" fill="#2c2c2c"/>
<circle cx="5.8" cy="373.7" r="0.5" fill="#e4e4e4"/>
<path d="M11.6,372.6 L13,372.6 L15,370.8 L15,376.6 L13,374.8 L11.6,374.8 Z" fill="#e4e4e4"/>
<path d="M16,372 C17,373 17,374.4 16,375.4 M17,371 C18.6,372.6 18.6,374.8 17,376.4" fill="none" stroke="#e4e4e4" stroke-width="0.6"/>
<circle cx="21.7" cy="373.7" r="1.7" fill="#e4e4e4"/>
<path d="M28.2,373 L28.2,372 A1.4,1.4 0 0 1 31,372 L31,373" fill="none" stroke="#e4e4e4" stroke-width="0.8"/>
<rect x="27.3" y="373" width="4.6" height="3.6" fill="#e4e4e4" rx="0.4"/>
<path d="M42.8,371 L46,371 L49.6,374.6 L46.6,377.2 L42.8,373.8 Z" fill="#e4e4e4"/>
<circle cx="44.4" cy="372.6" r="0.6" fill="#303030"/>
<text x="55.4" y="375.66" font-size="5.6" fill="#a8a8a8" font-style="italic" stroke="#a8a8a8" stroke-width="0.22">#</text>
<text x="72.6" y="375.66" font-size="5.6" fill="#a8a8a8" textLength="26.4" lengthAdjust="spacingAndGlyphs" stroke="#a8a8a8" stroke-width="0.22">Layer Name</text>
<text x="197.4" y="375.66" font-size="5.6" fill="#a8a8a8" textLength="12.6" lengthAdjust="spacingAndGlyphs" stroke="#a8a8a8" stroke-width="0.22">Mode</text>
<text x="237.4" y="375.66" font-size="5.6" fill="#a8a8a8" stroke="#a8a8a8" stroke-width="0.22">T</text>
<text x="246.2" y="375.66" font-size="5.6" fill="#a8a8a8" textLength="16" lengthAdjust="spacingAndGlyphs" stroke="#a8a8a8" stroke-width="0.22">TrkMat</text>
<text x="284.2" y="375.66" font-size="5.6" fill="#a8a8a8" textLength="14.4" lengthAdjust="spacingAndGlyphs" stroke="#a8a8a8" stroke-width="0.22">Parent</text>
<line x1="194.8" y1="369.2" x2="194.8" y2="377.3" stroke="#262626" stroke-width="0.7"/>
<line x1="234.8" y1="369.2" x2="234.8" y2="377.3" stroke="#262626" stroke-width="0.7"/>
<line x1="244" y1="369.2" x2="244" y2="377.3" stroke="#262626" stroke-width="0.7"/>
<line x1="281.6" y1="369.2" x2="281.6" y2="377.3" stroke="#262626" stroke-width="0.7"/>
<line x1="342.6" y1="369.2" x2="342.6" y2="377.3" stroke="#262626" stroke-width="0.7"/>
<rect x="0" y="378.3" width="350.4" height="8.84" fill="#3a3a3a"/>
<rect x="0" y="378.3" width="34.6" height="8.84" fill="#353535"/>
<rect x="350.4" y="378.3" width="642.5" height="8.84" fill="#474747"/>
<rect x="0" y="386.44" width="350.4" height="0.7" fill="#2a2a2a"/>
<rect x="350.4" y="386.34" width="642.5" height="0.8" fill="#303030"/>
<rect x="0" y="387.14" width="350.4" height="8.84" fill="#3a3a3a"/>
<rect x="0" y="387.14" width="34.6" height="8.84" fill="#353535"/>
<rect x="350.4" y="387.14" width="642.5" height="8.84" fill="#474747"/>
<rect x="0" y="395.28" width="350.4" height="0.7" fill="#2a2a2a"/>
<rect x="350.4" y="395.18" width="642.5" height="0.8" fill="#303030"/>
<rect x="0" y="395.98" width="350.4" height="8.84" fill="#3a3a3a"/>
<rect x="0" y="395.98" width="34.6" height="8.84" fill="#353535"/>
<rect x="350.4" y="395.98" width="642.5" height="8.84" fill="#474747"/>
<rect x="0" y="404.12" width="350.4" height="0.7" fill="#2a2a2a"/>
<rect x="350.4" y="404.02" width="642.5" height="0.8" fill="#303030"/>
<rect x="0" y="404.82" width="350.4" height="8.84" fill="#2c2c2c"/>
<rect x="0" y="404.82" width="34.6" height="8.84" fill="#2c2c2c"/>
<rect x="350.4" y="404.82" width="642.5" height="8.84" fill="#3d3d3d"/>
<rect x="0" y="412.96" width="350.4" height="0.7" fill="#292929"/>
<rect x="350.4" y="412.86" width="642.5" height="0.8" fill="#303030"/>
<rect x="0" y="413.66" width="350.4" height="8.84" fill="#3a3a3a"/>
<rect x="0" y="413.66" width="34.6" height="8.84" fill="#353535"/>
<rect x="350.4" y="413.66" width="642.5" height="8.84" fill="#474747"/>
<rect x="0" y="421.8" width="350.4" height="0.7" fill="#2a2a2a"/>
<rect x="350.4" y="421.7" width="642.5" height="0.8" fill="#303030"/>
<rect x="0" y="422.5" width="350.4" height="8.84" fill="#2c2c2c"/>
<rect x="0" y="422.5" width="34.6" height="8.84" fill="#2c2c2c"/>
<rect x="350.4" y="422.5" width="642.5" height="8.84" fill="#3d3d3d"/>
<rect x="0" y="430.64" width="350.4" height="0.7" fill="#292929"/>
<rect x="350.4" y="430.54" width="642.5" height="0.8" fill="#303030"/>
<rect x="0" y="431.34" width="350.4" height="8.84" fill="#2c2c2c"/>
<rect x="0" y="431.34" width="34.6" height="8.84" fill="#2c2c2c"/>
<rect x="350.4" y="431.34" width="642.5" height="8.84" fill="#3d3d3d"/>
<rect x="0" y="439.48" width="350.4" height="0.7" fill="#292929"/>
<rect x="350.4" y="439.38" width="642.5" height="0.8" fill="#303030"/>
<rect x="0" y="440.18" width="350.4" height="8.84" fill="#2c2c2c"/>
<rect x="0" y="440.18" width="34.6" height="8.84" fill="#2c2c2c"/>
<rect x="350.4" y="440.18" width="642.5" height="8.84" fill="#3d3d3d"/>
<rect x="0" y="448.32" width="350.4" height="0.7" fill="#292929"/>
<rect x="350.4" y="448.22" width="642.5" height="0.8" fill="#303030"/>
<rect x="0" y="449.02" width="350.4" height="8.84" fill="#2c2c2c"/>
<rect x="0" y="449.02" width="34.6" height="8.84" fill="#2c2c2c"/>
<rect x="350.4" y="449.02" width="642.5" height="8.84" fill="#3d3d3d"/>
<rect x="0" y="457.16" width="350.4" height="0.7" fill="#292929"/>
<rect x="350.4" y="457.06" width="642.5" height="0.8" fill="#303030"/>
<rect x="0" y="457.86" width="350.4" height="8.84" fill="#2c2c2c"/>
<rect x="0" y="457.86" width="34.6" height="8.84" fill="#2c2c2c"/>
<rect x="350.4" y="457.86" width="642.5" height="8.84" fill="#3d3d3d"/>
<rect x="0" y="466" width="350.4" height="0.7" fill="#292929"/>
<rect x="350.4" y="465.9" width="642.5" height="0.8" fill="#303030"/>
<rect x="0" y="466.7" width="350.4" height="6.3" fill="#2c2c2c"/>
<rect x="0" y="466.7" width="34.6" height="6.3" fill="#2c2c2c"/>
<rect x="350.4" y="466.7" width="642.5" height="6.3" fill="#3d3d3d"/>
<rect x="0" y="472.3" width="350.4" height="0.7" fill="#292929"/>
<rect x="350.4" y="472.2" width="642.5" height="0.8" fill="#303030"/>
<rect x="355" y="378.6" width="159.58" height="7.54" fill="#5d74a9"/>
<rect x="462.82" y="387.44" width="530.08" height="7.54" fill="#5d74a9"/>
<rect x="462.82" y="396.28" width="530.08" height="7.54" fill="#a59a55"/>
<rect x="462.82" y="413.96" width="530.08" height="7.54" fill="#a59a55"/>
<path d="M2.4,382.62 C4,380.02 7.6,380.02 9.2,382.62 C7.6,385.22 4,385.22 2.4,382.62 Z" fill="#9a9a9a"/>
<circle cx="5.8" cy="382.62" r="1.25" fill="#2c2c2c"/>
<circle cx="5.8" cy="382.62" r="0.5" fill="#9a9a9a"/>
<rect x="19" y="379.32" width="5.6" height="6.6" fill="#2a2a2a"/>
<rect x="26.6" y="379.32" width="5.6" height="6.6" fill="#2a2a2a"/>
<path d="M38.6,380.22 l3.8,2.4 l-3.8,2.4 z" fill="#e0e0e0"/>
<rect x="44.5" y="379.32" width="6.3" height="6.6" fill="#7da2ee"/>
<text x="55.4" y="385" font-size="6.8" fill="#dadada" stroke="#dadada" stroke-width="0.22">1</text>
<polygon points="74,378.92 74.86,381.23 77.33,381.34 75.4,382.87 76.06,385.25 74,383.89 71.94,385.25 72.6,382.87 70.67,381.34 73.14,381.23" fill="#e6e6e6"/>
<text x="81" y="385" font-size="6.8" fill="#d2d2d2" font-weight="700" textLength="26.6" lengthAdjust="spacingAndGlyphs">Flap TOP</text>
<rect x="197.8" y="378.92" width="34.2" height="7.4" fill="#222222" rx="0.7"/>
<text x="199.7" y="384.93" font-size="6.6" fill="#f0f0f0" font-weight="700" textLength="20.2" lengthAdjust="spacingAndGlyphs">Normal</text>
<path d="M225.9,381.62 l2.1,2.1 l2.1,-2.1" fill="none" stroke="#c8c8c8" stroke-width="0.95"/>
<rect x="236" y="379.32" width="5.8" height="6.6" fill="#2a2a2a"/>
<path d="M288,383.02 a1.2,1.2 0 1 1 -1.2,-1.2 a2.4,2.4 0 1 1 -2.4,2.4" fill="none" stroke="#9c9c9c" stroke-width="0.8"/>
<circle cx="289.2" cy="380.42" r="0.8" fill="#9c9c9c"/>
<rect x="294.2" y="378.92" width="45.8" height="7.4" fill="#222222" rx="0.7"/>
<text x="296.1" y="384.93" font-size="6.6" fill="#f0f0f0" font-weight="700" textLength="35.4" lengthAdjust="spacingAndGlyphs">6. Envelope I</text>
<path d="M333.9,381.62 l2.1,2.1 l2.1,-2.1" fill="none" stroke="#c8c8c8" stroke-width="0.95"/>
<path d="M2.4,391.46 C4,388.86 7.6,388.86 9.2,391.46 C7.6,394.06 4,394.06 2.4,391.46 Z" fill="#9a9a9a"/>
<circle cx="5.8" cy="391.46" r="1.25" fill="#2c2c2c"/>
<circle cx="5.8" cy="391.46" r="0.5" fill="#9a9a9a"/>
<rect x="19" y="388.16" width="5.6" height="6.6" fill="#2a2a2a"/>
<rect x="26.6" y="388.16" width="5.6" height="6.6" fill="#2a2a2a"/>
<path d="M38.6,389.06 l3.8,2.4 l-3.8,2.4 z" fill="#e0e0e0"/>
<rect x="44.5" y="388.16" width="6.3" height="6.6" fill="#7da2ee"/>
<text x="55.4" y="393.84" font-size="6.8" fill="#dadada" stroke="#dadada" stroke-width="0.22">2</text>
<polygon points="74,387.76 74.86,390.07 77.33,390.18 75.4,391.71 76.06,394.09 74,392.73 71.94,394.09 72.6,391.71 70.67,390.18 73.14,390.07" fill="#e6e6e6"/>
<text x="81" y="393.84" font-size="6.8" fill="#d2d2d2" font-weight="700" textLength="44.2" lengthAdjust="spacingAndGlyphs">Envelope Front</text>
<rect x="197.8" y="387.76" width="34.2" height="7.4" fill="#222222" rx="0.7"/>
<text x="199.7" y="393.77" font-size="6.6" fill="#f0f0f0" font-weight="700" textLength="20.2" lengthAdjust="spacingAndGlyphs">Normal</text>
<path d="M225.9,390.46 l2.1,2.1 l2.1,-2.1" fill="none" stroke="#c8c8c8" stroke-width="0.95"/>
<rect x="236" y="388.16" width="5.8" height="6.6" fill="#2a2a2a"/>
<rect x="246.2" y="387.76" width="32" height="7.4" fill="#222222" rx="0.7"/>
<text x="248.1" y="393.77" font-size="6.6" fill="#f0f0f0" font-weight="700" textLength="14.2" lengthAdjust="spacingAndGlyphs">None</text>
<path d="M272.1,390.46 l2.1,2.1 l2.1,-2.1" fill="none" stroke="#c8c8c8" stroke-width="0.95"/>
<path d="M288,391.86 a1.2,1.2 0 1 1 -1.2,-1.2 a2.4,2.4 0 1 1 -2.4,2.4" fill="none" stroke="#9c9c9c" stroke-width="0.8"/>
<circle cx="289.2" cy="389.26" r="0.8" fill="#9c9c9c"/>
<rect x="294.2" y="387.76" width="45.8" height="7.4" fill="#222222" rx="0.7"/>
<text x="296.1" y="393.77" font-size="6.6" fill="#f0f0f0" font-weight="700" textLength="14.2" lengthAdjust="spacingAndGlyphs">None</text>
<path d="M333.9,390.46 l2.1,2.1 l2.1,-2.1" fill="none" stroke="#c8c8c8" stroke-width="0.95"/>
<path d="M2.4,400.3 C4,397.7 7.6,397.7 9.2,400.3 C7.6,402.9 4,402.9 2.4,400.3 Z" fill="#f0f0f0"/>
<circle cx="5.8" cy="400.3" r="1.25" fill="#2c2c2c"/>
<circle cx="5.8" cy="400.3" r="0.5" fill="#f0f0f0"/>
<rect x="19" y="397" width="5.6" height="6.6" fill="#2a2a2a"/>
<rect x="26.6" y="397" width="5.6" height="6.6" fill="#2a2a2a"/>
<circle cx="21.8" cy="400.3" r="1.7" fill="#f0f0f0"/>
<path d="M38,398.4 l4.8,0 l-2.4,3.9 z" fill="#e0e0e0"/>
<rect x="44.5" y="397" width="6.3" height="6.6" fill="#f0d56c"/>
<text x="55.4" y="402.68" font-size="6.8" fill="#dadada" stroke="#dadada" stroke-width="0.22">3</text>
<polygon points="74,396.6 74.86,398.91 77.33,399.02 75.4,400.55 76.06,402.93 74,401.57 71.94,402.93 72.6,400.55 70.67,399.02 73.14,398.91" fill="#e6e6e6"/>
<text x="81" y="402.68" font-size="6.8" fill="#d2d2d2" font-weight="700" textLength="23" lengthAdjust="spacingAndGlyphs">Letter 2</text>
<rect x="197.8" y="396.6" width="34.2" height="7.4" fill="#222222" rx="0.7"/>
<text x="199.7" y="402.61" font-size="6.6" fill="#f0f0f0" font-weight="700" textLength="20.2" lengthAdjust="spacingAndGlyphs">Normal</text>
<path d="M225.9,399.3 l2.1,2.1 l2.1,-2.1" fill="none" stroke="#c8c8c8" stroke-width="0.95"/>
<rect x="236" y="397" width="5.8" height="6.6" fill="#2a2a2a"/>
<rect x="246.2" y="396.6" width="32" height="7.4" fill="#222222" rx="0.7"/>
<text x="248.1" y="402.61" font-size="6.6" fill="#f0f0f0" font-weight="700" textLength="14.2" lengthAdjust="spacingAndGlyphs">None</text>
<path d="M272.1,399.3 l2.1,2.1 l2.1,-2.1" fill="none" stroke="#c8c8c8" stroke-width="0.95"/>
<path d="M288,400.7 a1.2,1.2 0 1 1 -1.2,-1.2 a2.4,2.4 0 1 1 -2.4,2.4" fill="none" stroke="#9c9c9c" stroke-width="0.8"/>
<circle cx="289.2" cy="398.1" r="0.8" fill="#9c9c9c"/>
<rect x="294.2" y="396.6" width="45.8" height="7.4" fill="#222222" rx="0.7"/>
<text x="296.1" y="402.61" font-size="6.6" fill="#f0f0f0" font-weight="700" textLength="14.2" lengthAdjust="spacingAndGlyphs">None</text>
<path d="M333.9,399.3 l2.1,2.1 l2.1,-2.1" fill="none" stroke="#c8c8c8" stroke-width="0.95"/>
<path d="M2.4,417.98 C4,415.38 7.6,415.38 9.2,417.98 C7.6,420.58 4,420.58 2.4,417.98 Z" fill="#f0f0f0"/>
<circle cx="5.8" cy="417.98" r="1.25" fill="#2c2c2c"/>
<circle cx="5.8" cy="417.98" r="0.5" fill="#f0f0f0"/>
<rect x="19" y="414.68" width="5.6" height="6.6" fill="#2a2a2a"/>
<rect x="26.6" y="414.68" width="5.6" height="6.6" fill="#2a2a2a"/>
<circle cx="21.8" cy="417.98" r="1.7" fill="#f0f0f0"/>
<path d="M38,416.08 l4.8,0 l-2.4,3.9 z" fill="#e0e0e0"/>
<rect x="44.5" y="414.68" width="6.3" height="6.6" fill="#f0d56c"/>
<text x="55.4" y="420.36" font-size="6.8" fill="#dadada" stroke="#dadada" stroke-width="0.22">4</text>
<polygon points="74,414.28 74.86,416.59 77.33,416.7 75.4,418.23 76.06,420.61 74,419.25 71.94,420.61 72.6,418.23 70.67,416.7 73.14,416.59" fill="#e6e6e6"/>
<text x="81" y="420.36" font-size="6.8" fill="#d2d2d2" font-weight="700" textLength="17" lengthAdjust="spacingAndGlyphs">Letter</text>
<rect x="197.8" y="414.28" width="34.2" height="7.4" fill="#222222" rx="0.7"/>
<text x="199.7" y="420.29" font-size="6.6" fill="#f0f0f0" font-weight="700" textLength="20.2" lengthAdjust="spacingAndGlyphs">Normal</text>
<path d="M225.9,416.98 l2.1,2.1 l2.1,-2.1" fill="none" stroke="#c8c8c8" stroke-width="0.95"/>
<rect x="236" y="414.68" width="5.8" height="6.6" fill="#2a2a2a"/>
<rect x="246.2" y="414.28" width="32" height="7.4" fill="#222222" rx="0.7"/>
<text x="248.1" y="420.29" font-size="6.6" fill="#f0f0f0" font-weight="700" textLength="14.2" lengthAdjust="spacingAndGlyphs">None</text>
<path d="M272.1,416.98 l2.1,2.1 l2.1,-2.1" fill="none" stroke="#c8c8c8" stroke-width="0.95"/>
<path d="M288,418.38 a1.2,1.2 0 1 1 -1.2,-1.2 a2.4,2.4 0 1 1 -2.4,2.4" fill="none" stroke="#9c9c9c" stroke-width="0.8"/>
<circle cx="289.2" cy="415.78" r="0.8" fill="#9c9c9c"/>
<rect x="294.2" y="414.28" width="45.8" height="7.4" fill="#222222" rx="0.7"/>
<text x="296.1" y="420.29" font-size="6.6" fill="#f0f0f0" font-weight="700" textLength="14.2" lengthAdjust="spacingAndGlyphs">None</text>
<path d="M333.9,416.98 l2.1,2.1 l2.1,-2.1" fill="none" stroke="#c8c8c8" stroke-width="0.95"/>
<path d="M3.6,409.14 l3.6,-2.4 l0,4.8 z" fill="#d8d8d8"/>
<path d="M11.4,409.14 l2.3,-2.3 l2.3,2.3 l-2.3,2.3 z" fill="none" stroke="#b8b8b8" stroke-width="0.7"/>
<path d="M23.8,409.14 l-3.6,-2.4 l0,4.8 z" fill="#d8d8d8"/>
<circle cx="84" cy="409.64" r="2.6" fill="none" stroke="#2d9fea" stroke-width="0.9"/>
<line x1="84" y1="409.64" x2="85" y2="408.24" stroke="#2d9fea" stroke-width="0.7"/>
<rect x="83.1" y="405.44" width="1.8" height="1" fill="#2d9fea"/>
<path d="M90.6,406.14 L90.6,411.94 L96,411.94 M91,410.54 L93,408.54 L95.6,407.94" fill="none" stroke="#d0d0d0" stroke-width="0.8"/>
<text x="100.6" y="411.52" font-size="6.8" fill="#c4c4c4" textLength="22.4" lengthAdjust="spacingAndGlyphs" stroke="#c4c4c4" stroke-width="0.22">Position</text>
<text x="197" y="411.45" font-size="6.6" fill="#2d9fea" font-weight="700" textLength="31" lengthAdjust="spacingAndGlyphs" stroke="#2d9fea" stroke-width="0.22">0.0,-215.1</text>
<path d="M46.8,424.92 l4.8,0 l-2.4,3.9 z" fill="#e0e0e0"/>
<text x="56.2" y="429.2" font-size="6.8" fill="#c4c4c4" textLength="24.4" lengthAdjust="spacingAndGlyphs" stroke="#c4c4c4" stroke-width="0.22">Contents</text>
<text x="258.2" y="429.2" font-size="6.8" fill="#c4c4c4" textLength="12.6" lengthAdjust="spacingAndGlyphs" stroke="#c4c4c4" stroke-width="0.22">Add:</text>
<circle cx="275.6" cy="426.82" r="2.7" fill="#f0f0f0"/>
<path d="M274.7,425.42 l2.3,1.4 l-2.3,1.4 z" fill="#222"/>
<path d="M2.4,435.66 C4,433.06 7.6,433.06 9.2,435.66 C7.6,438.26 4,438.26 2.4,435.66 Z" fill="#f0f0f0"/>
<circle cx="5.8" cy="435.66" r="1.25" fill="#2c2c2c"/>
<circle cx="5.8" cy="435.66" r="0.5" fill="#f0f0f0"/>
<path d="M55.8,433.76 l4.8,0 l-2.4,3.9 z" fill="#e0e0e0"/>
<text x="64.8" y="438.04" font-size="6.8" fill="#c4c4c4" textLength="32.2" lengthAdjust="spacingAndGlyphs" stroke="#c4c4c4" stroke-width="0.22">Rectangle 1</text>
<rect x="198" y="431.96" width="80.2" height="7.4" fill="#222222" rx="0.7"/>
<text x="200" y="437.97" font-size="6.6" fill="#f0f0f0" font-weight="700" textLength="20.2" lengthAdjust="spacingAndGlyphs">Normal</text>
<path d="M272.1,434.66 l2.1,2.1 l2.1,-2.1" fill="none" stroke="#c8c8c8" stroke-width="0.95"/>
<path d="M2.4,444.5 C4,441.9 7.6,441.9 9.2,444.5 C7.6,447.1 4,447.1 2.4,444.5 Z" fill="#f0f0f0"/>
<circle cx="5.8" cy="444.5" r="1.25" fill="#2c2c2c"/>
<circle cx="5.8" cy="444.5" r="0.5" fill="#f0f0f0"/>
<path d="M64.4,442.6 l4.8,0 l-2.4,3.9 z" fill="#e0e0e0"/>
<text x="73.6" y="446.88" font-size="6.8" fill="#c4c4c4" textLength="17.2" lengthAdjust="spacingAndGlyphs" stroke="#c4c4c4" stroke-width="0.22">Path 1</text>
<rect x="197.6" y="441.9" width="7.8" height="2.2" fill="#2d9fea"/>
<rect x="197.6" y="445.1" width="7.8" height="2.2" fill="#2d9fea"/>
<rect x="199.4" y="442.5" width="6" height="0.9" fill="#2c2c2c"/>
<rect x="197.6" y="445.8" width="5.8" height="0.8" fill="#2c2c2c"/>
<rect x="207.2" y="441.9" width="7.8" height="2.2" fill="#e0e0e0"/>
<rect x="207.2" y="445.1" width="7.8" height="2.2" fill="#e0e0e0"/>
<rect x="209" y="442.5" width="4.2" height="0.9" fill="#2c2c2c"/>
<rect x="209" y="445.8" width="4.2" height="0.8" fill="#2c2c2c"/>
<circle cx="84" cy="453.84" r="2.6" fill="none" stroke="#d8d8d8" stroke-width="0.9"/>
<line x1="84" y1="453.84" x2="85" y2="452.44" stroke="#d8d8d8" stroke-width="0.7"/>
<rect x="83.1" y="449.64" width="1.8" height="1" fill="#d8d8d8"/>
<text x="91" y="455.72" font-size="6.8" fill="#c4c4c4" textLength="12.2" lengthAdjust="spacingAndGlyphs" stroke="#c4c4c4" stroke-width="0.22">Path</text>
<path d="M2.4,462.18 C4,459.58 7.6,459.58 9.2,462.18 C7.6,464.78 4,464.78 2.4,462.18 Z" fill="#f0f0f0"/>
<circle cx="5.8" cy="462.18" r="1.25" fill="#2c2c2c"/>
<circle cx="5.8" cy="462.18" r="0.5" fill="#f0f0f0"/>
<path d="M64.4,460.28 l4.8,0 l-2.4,3.9 z" fill="#e0e0e0"/>
<text x="73.6" y="464.56" font-size="6.8" fill="#c4c4c4" textLength="46" lengthAdjust="spacingAndGlyphs" stroke="#c4c4c4" stroke-width="0.22">Rectangle Path 2</text>
<rect x="197.6" y="459.58" width="7.8" height="2.2" fill="#2d9fea"/>
<rect x="197.6" y="462.78" width="7.8" height="2.2" fill="#2d9fea"/>
<rect x="199.4" y="460.18" width="6" height="0.9" fill="#2c2c2c"/>
<rect x="197.6" y="463.48" width="5.8" height="0.8" fill="#2c2c2c"/>
<rect x="207.2" y="459.58" width="7.8" height="2.2" fill="#e0e0e0"/>
<rect x="207.2" y="462.78" width="7.8" height="2.2" fill="#e0e0e0"/>
<rect x="209" y="460.18" width="4.2" height="0.9" fill="#2c2c2c"/>
<rect x="209" y="463.48" width="4.2" height="0.8" fill="#2c2c2c"/>
<circle cx="84" cy="471.52" r="2.6" fill="none" stroke="#d8d8d8" stroke-width="0.9"/>
<line x1="84" y1="471.52" x2="85" y2="470.12" stroke="#d8d8d8" stroke-width="0.7"/>
<rect x="83.1" y="467.32" width="1.8" height="1" fill="#d8d8d8"/>
<text x="91" y="473.4" font-size="6.8" fill="#c4c4c4" textLength="11" lengthAdjust="spacingAndGlyphs" stroke="#c4c4c4" stroke-width="0.22">Size</text>
<rect x="198" y="468.02" width="5.4" height="6" fill="#1f1f1f"/>
<text x="206.4" y="473.33" font-size="6.6" fill="#2d9fea" font-weight="700" textLength="35.2" lengthAdjust="spacingAndGlyphs" stroke="#2d9fea" stroke-width="0.22">432.0,200.0</text>
<line x1="350.2" y1="351" x2="350.2" y2="473" stroke="#1a1a1a" stroke-width="1"/>
<rect x="350.4" y="350" width="642.5" height="18" fill="#2b2b2b"/>
<rect x="353" y="352.7" width="625" height="4.6" fill="#808080" rx="1"/>
<rect x="978" y="352.7" width="11.5" height="4.6" fill="#4c4a48" rx="1"/>
<rect x="989.5" y="352.2" width="3.4" height="5.4" fill="#151515"/>
<rect x="350.5" y="352.6" width="3.9" height="4.8" fill="#2d9fea" rx="1.2"/>
<rect x="976.2" y="352.6" width="3.8" height="4.8" fill="#2d9fea" rx="1.6"/>
<rect x="536.6" y="354" width="1" height="2.4" fill="#4aa8ec"/>
<clipPath id="tgclip"><rect x="352" y="350" width="641" height="123"/></clipPath>
<g clip-path="url(#tgclip)">
<line x1="355" y1="366.2" x2="355" y2="367.8" stroke="#a8a8a8" stroke-width="0.9"/>
<text x="363.2" y="363.37" font-size="6.2" fill="#bcbcbc" text-anchor="end" textLength="14" lengthAdjust="spacingAndGlyphs" stroke="#bcbcbc" stroke-width="0.22">0:00f</text>
<line x1="398.13" y1="366.2" x2="398.13" y2="367.8" stroke="#a8a8a8" stroke-width="0.9"/>
<text x="394.33" y="363.37" font-size="6.2" fill="#bcbcbc" textLength="8" lengthAdjust="spacingAndGlyphs" stroke="#bcbcbc" stroke-width="0.22">10f</text>
<line x1="441.26" y1="366.2" x2="441.26" y2="367.8" stroke="#a8a8a8" stroke-width="0.9"/>
<text x="437.46" y="363.37" font-size="6.2" fill="#bcbcbc" textLength="8" lengthAdjust="spacingAndGlyphs" stroke="#bcbcbc" stroke-width="0.22">20f</text>
<line x1="484.39" y1="366.2" x2="484.39" y2="367.8" stroke="#a8a8a8" stroke-width="0.9"/>
<text x="476.29" y="363.37" font-size="6.2" fill="#bcbcbc" textLength="16.6" lengthAdjust="spacingAndGlyphs" stroke="#bcbcbc" stroke-width="0.22">01:00f</text>
<line x1="527.52" y1="366.2" x2="527.52" y2="367.8" stroke="#a8a8a8" stroke-width="0.9"/>
<text x="523.72" y="363.37" font-size="6.2" fill="#bcbcbc" textLength="8" lengthAdjust="spacingAndGlyphs" stroke="#bcbcbc" stroke-width="0.22">10f</text>
<line x1="570.65" y1="366.2" x2="570.65" y2="367.8" stroke="#a8a8a8" stroke-width="0.9"/>
<text x="566.85" y="363.37" font-size="6.2" fill="#bcbcbc" textLength="8" lengthAdjust="spacingAndGlyphs" stroke="#bcbcbc" stroke-width="0.22">20f</text>
<line x1="613.78" y1="366.2" x2="613.78" y2="367.8" stroke="#a8a8a8" stroke-width="0.9"/>
<text x="605.68" y="363.37" font-size="6.2" fill="#bcbcbc" textLength="16.6" lengthAdjust="spacingAndGlyphs" stroke="#bcbcbc" stroke-width="0.22">02:00f</text>
<line x1="656.91" y1="366.2" x2="656.91" y2="367.8" stroke="#a8a8a8" stroke-width="0.9"/>
<text x="653.11" y="363.37" font-size="6.2" fill="#bcbcbc" textLength="8" lengthAdjust="spacingAndGlyphs" stroke="#bcbcbc" stroke-width="0.22">10f</text>
<line x1="700.04" y1="366.2" x2="700.04" y2="367.8" stroke="#a8a8a8" stroke-width="0.9"/>
<text x="696.24" y="363.37" font-size="6.2" fill="#bcbcbc" textLength="8" lengthAdjust="spacingAndGlyphs" stroke="#bcbcbc" stroke-width="0.22">20f</text>
<line x1="743.17" y1="366.2" x2="743.17" y2="367.8" stroke="#a8a8a8" stroke-width="0.9"/>
<text x="735.07" y="363.37" font-size="6.2" fill="#bcbcbc" textLength="16.6" lengthAdjust="spacingAndGlyphs" stroke="#bcbcbc" stroke-width="0.22">03:00f</text>
<line x1="786.3" y1="366.2" x2="786.3" y2="367.8" stroke="#a8a8a8" stroke-width="0.9"/>
<text x="782.5" y="363.37" font-size="6.2" fill="#bcbcbc" textLength="8" lengthAdjust="spacingAndGlyphs" stroke="#bcbcbc" stroke-width="0.22">10f</text>
<line x1="829.43" y1="366.2" x2="829.43" y2="367.8" stroke="#a8a8a8" stroke-width="0.9"/>
<text x="825.63" y="363.37" font-size="6.2" fill="#bcbcbc" textLength="8" lengthAdjust="spacingAndGlyphs" stroke="#bcbcbc" stroke-width="0.22">20f</text>
<line x1="872.56" y1="366.2" x2="872.56" y2="367.8" stroke="#a8a8a8" stroke-width="0.9"/>
<text x="864.46" y="363.37" font-size="6.2" fill="#bcbcbc" textLength="16.6" lengthAdjust="spacingAndGlyphs" stroke="#bcbcbc" stroke-width="0.22">04:00f</text>
<line x1="915.69" y1="366.2" x2="915.69" y2="367.8" stroke="#a8a8a8" stroke-width="0.9"/>
<text x="911.89" y="363.37" font-size="6.2" fill="#bcbcbc" textLength="8" lengthAdjust="spacingAndGlyphs" stroke="#bcbcbc" stroke-width="0.22">10f</text>
<line x1="958.82" y1="366.2" x2="958.82" y2="367.8" stroke="#a8a8a8" stroke-width="0.9"/>
<text x="955.02" y="363.37" font-size="6.2" fill="#bcbcbc" textLength="8" lengthAdjust="spacingAndGlyphs" stroke="#bcbcbc" stroke-width="0.22">20f</text>
</g>
<rect x="350.4" y="367.9" width="642.5" height="7.3" fill="#1d1d1d"/>
<rect x="354" y="368.1" width="638.9" height="7.1" fill="#707070"/>
<rect x="350.8" y="367.9" width="3.7" height="7.6" fill="#2d9fea" rx="1"/>
<rect x="350.4" y="375" width="642.5" height="3.5" fill="#1e1e1e"/>
<rect x="355" y="375.9" width="133.2" height="2.1" fill="#1f9a3c"/>
<rect x="493.3" y="375.9" width="25.5" height="2.1" fill="#1f9a3c"/>
<rect x="523.2" y="375.9" width="25.5" height="2.1" fill="#1f9a3c"/>
<path d="M482.19,406.84 l4.4,0 l-1.5,2.3 l1.5,2.3 l-4.4,0 l1.5,-2.3 z" fill="#d4d4d4"/>
<path d="M611.58,406.84 l4.4,0 l-1.5,2.3 l1.5,2.3 l-4.4,0 l1.5,-2.3 z" fill="#d4d4d4"/>
<path d="M482.69,423.82 l3.4,0 M482.69,429.82 l3.4,0 M484.39,423.82 l0,6" fill="none" stroke="#d4d4d4" stroke-width="1"/>
<path d="M482.69,432.66 l3.4,0 M482.69,438.66 l3.4,0 M484.39,432.66 l0,6" fill="none" stroke="#d4d4d4" stroke-width="1"/>
<path d="M482.69,441.5 l3.4,0 M482.69,447.5 l3.4,0 M484.39,441.5 l0,6" fill="none" stroke="#d4d4d4" stroke-width="1"/>
<path d="M482.69,450.34 l3.4,0 M482.69,456.34 l3.4,0 M484.39,450.34 l0,6" fill="none" stroke="#d4d4d4" stroke-width="1"/>
<path d="M482.69,459.18 l3.4,0 M482.69,465.18 l3.4,0 M484.39,459.18 l0,6" fill="none" stroke="#d4d4d4" stroke-width="1"/>
<path d="M482.69,468.02 l3.4,0 M482.69,474.02 l3.4,0 M484.39,468.02 l0,6" fill="none" stroke="#d4d4d4" stroke-width="1"/>
<rect x="992.9" y="350" width="7.1" height="123" fill="#292929"/>
<rect x="998.8" y="336" width="1.2" height="137" fill="#1c1c1c"/>
<rect x="992.9" y="378.3" width="0.8" height="94.7" fill="#222"/>
<path d="M994.6,369.2 L1000,369.2 L1000,373 L997.6,375.2 L994.6,372.6 Z" fill="#dcdcdc"/>
<path d="M994.4,383.4 L997.4,380 L1000,382.6 L1000,386.8 L996.6,386.8 Z" fill="#e4e4e4"/>
<path d="M995.6,383.6 L997.4,381.8 L999,383.4" fill="none" stroke="#222" stroke-width="0.6"/>
<line x1="540.46" y1="363" x2="540.46" y2="473" stroke="#3a93d8" stroke-width="0.95"/>
<rect x="537" y="360" width="6.4" height="4" fill="#2d8fe0" rx="0.5"/>
<path d="M540.6,362.6 L540.6,370.6 L542.5,368.9 L543.8,371.8 L545,371.2 L543.7,368.4 L546.2,368.2 Z" fill="#ffffff" stroke="#111" stroke-width="0.7" stroke-linejoin="round"/>
<rect x="0" y="336" width="1.2" height="137" fill="#3a4046"/>
</svg>
</body></html>
